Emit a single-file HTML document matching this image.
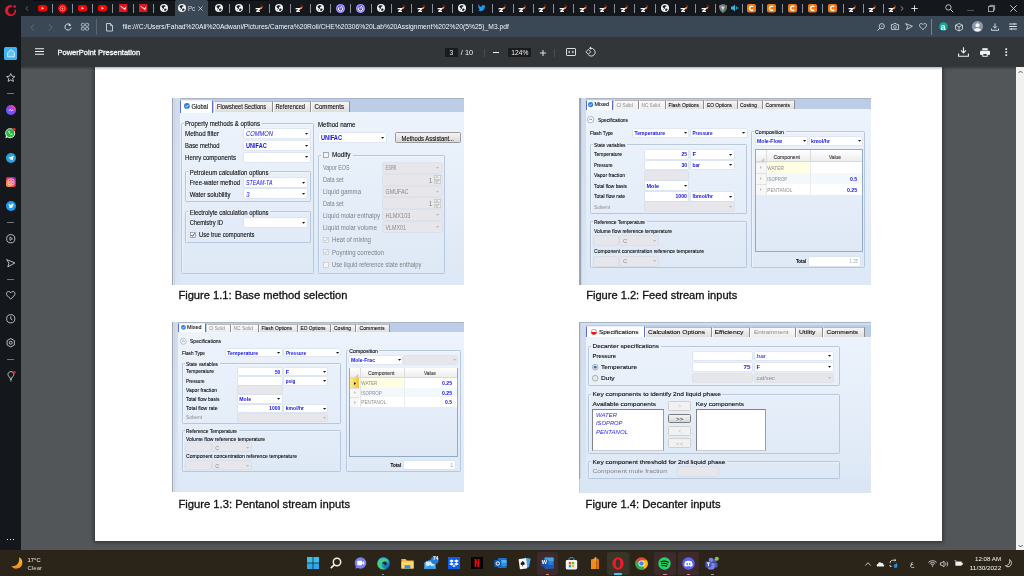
<!DOCTYPE html>
<html lang="en"><head><meta charset="utf-8"><title>PowerPoint Presentation</title>
<style>
*{margin:0;padding:0;box-sizing:border-box}
html,body{width:1024px;height:576px;overflow:hidden;background:#14171c;font-family:"Liberation Sans",sans-serif;}
.a{position:absolute}
.t{position:absolute;white-space:nowrap;line-height:1;}
.x{left:0;top:0;transform-origin:0 0}
#tabbar{left:0;top:0;width:1024px;height:16px;background:#14171c}
#side{left:0;top:0;width:21px;height:550px;background:#14171c}
#addr{left:21px;top:16px;width:1003px;height:21px;background:#3a4755}
#pdfbar{left:21px;top:37px;width:1003px;height:30px;background:#323639}
#pdfbg{left:21px;top:67px;width:995px;height:483px;background:#525659;overflow:hidden}
#page{left:74px;top:0;width:847px;height:474px;background:#fff;box-shadow:0 0 4px 1px rgba(0,0,0,.45)}
#vscroll{left:1016px;top:67px;width:8px;height:483px;background:#f1f1f1}
#task{left:0;top:550px;width:1024px;height:26px;background:#2b2419}
.sep{position:absolute;width:1px;background:#9aa0a8}
svg{position:absolute;overflow:visible}
</style></head>
<body>

<div class="a" id="root" style="left:0;top:0;width:1024px;height:576px;will-change:transform">
<div class="a" id="side"></div>
<div class="a" style="left:4.2px;top:47px;width:12.8px;height:12.8px;background:#3fb3ee;border-radius:1.6px"></div>
<svg style="left:6.6px;top:49px" width="8" height="8.5" viewBox="0 0 8 8.5"><path d="M.6 3.6 L4 .6 L7.4 3.6 V7.8 H.6Z" stroke="#d6f0ff" stroke-width=".9" fill="rgba(255,255,255,.22)" stroke-linejoin="round"/></svg>
<svg style="left:6px;top:72.5px" width="9.5" height="9" viewBox="0 0 9.5 9"><path d="M4.75 .6 L6 3.2 L8.9 3.5 L6.7 5.500 L7.400 8.4 L4.75 6.9 L2.1 8.4 L2.8 5.5 L.6 3.5 L3.5 3.2Z" stroke="#dfe2e6" stroke-width=".8" fill="none" stroke-linejoin="round"/></svg>
<div class="a" style="left:7.2px;top:93.4px;width:6.6px;height:1px;background:#6d747c"></div>
<svg style="left:5.6px;top:104.6px" width="10" height="10" viewBox="0 0 10 10"><defs><linearGradient id="mg" x1="0" y1="1" x2="1" y2="0"><stop offset="0" stop-color="#2a7cff"/><stop offset=".55" stop-color="#9a3df5"/><stop offset="1" stop-color="#ff5f6d"/></linearGradient></defs><circle cx="5" cy="5" r="5" fill="url(#mg)"/><path d="M2.2 6.200 L4.2 3.9 L5.6 5.2 L7.800 3.9 L5.800 6.200 L4.400 4.900Z" fill="#fff"/></svg>
<svg style="left:5.4px;top:128.4px" width="10.5" height="10.5" viewBox="0 0 10.5 10.5"><circle cx="5.2" cy="5.2" r="5" fill="#e9f5ea"/><circle cx="5.2" cy="5.200" r="4.1" fill="#2bb741"/><path d="M.3 10.200 L1.200 7.6 L2.900 9.300Z" fill="#e9f5ea"/><path d="M3.4 3 C3.200 4.800 5.300 7 7.200 6.900 L7.400 6 L6.400 5.500 L5.900 6 C5.200 5.700 4.600 5 4.300 4.400 L4.800 3.900 L4.300 2.900Z" fill="#fff"/><circle cx="9.200" cy="1.3" r="1.500" fill="#f01c24"/></svg>
<svg style="left:5.6px;top:153px" width="10" height="10" viewBox="0 0 10 10"><circle cx="5" cy="5" r="5" fill="#2a9fd9"/><path d="M2.100 4.900 L7.600 2.800 L6.700 7.400 L5.100 6.200 L4.300 7 L4.200 5.600 L6.500 3.700 L3.600 5.400Z" fill="#fff"/></svg>
<svg style="left:5.6px;top:177px" width="10" height="10" viewBox="0 0 10 10"><defs><linearGradient id="ig" x1="0" y1="1" x2="1" y2="0"><stop offset="0" stop-color="#fdc04f"/><stop offset=".3" stop-color="#f56a2a"/><stop offset=".6" stop-color="#e0206a"/><stop offset="1" stop-color="#6a3ad0"/></linearGradient></defs><rect width="10" height="10" rx="2.200" fill="url(#ig)"/><rect x="2.100" y="2.100" width="5.800" height="5.800" rx="1.600" stroke="#fff" stroke-width=".8" fill="none"/><circle cx="5" cy="5" r="1.400" stroke="#fff" stroke-width=".8" fill="none"/></svg>
<svg style="left:5.6px;top:201px" width="10" height="10" viewBox="0 0 10 10"><circle cx="5" cy="5" r="5" fill="#1d9bf0"/><path d="M7.900 3.300 C7.700 3.400 7.500 3.500 7.200 3.500 C7.500 3.300 7.700 3.100 7.800 2.800 C7.500 2.900 7.300 3 7 3.100 C6.400 2.400 5.100 2.900 5.300 3.900 C4.300 3.900 3.400 3.400 2.800 2.700 C2.500 3.200 2.600 3.900 3.100 4.300 C2.900 4.300 2.700 4.200 2.600 4.100 C2.600 4.700 3 5.200 3.500 5.300 C3.400 5.300 3.200 5.400 3 5.300 C3.100 5.800 3.600 6.100 4.100 6.100 C3.600 6.500 3 6.700 2.400 6.600 C4.600 8 7.300 6.400 7.300 3.900 C7.500 3.700 7.700 3.500 7.900 3.300Z" fill="#fff"/></svg>
<div class="a" style="left:7.2px;top:222px;width:6.6px;height:1px;background:#6d747c"></div>
<svg style="left:6px;top:234px" width="9.5" height="9.5" viewBox="0 0 9.5 9.5"><circle cx="4.750" cy="4.750" r="4.100" stroke="#dfe2e6" stroke-width=".8" fill="none"/><path d="M3.900 3.100 L6.500 4.750 L3.900 6.400Z" stroke="#dfe2e6" stroke-width=".7" fill="none" stroke-linejoin="round"/></svg>
<svg style="left:6px;top:258.5px" width="9.5" height="8.5" viewBox="0 0 9.5 8.5"><path d="M.6 .6 L8.900 3.900 L1.800 7.900 L3 4.200Z" stroke="#dfe2e6" stroke-width=".8" fill="none" stroke-linejoin="round"/></svg>
<div class="a" style="left:7.2px;top:279px;width:6.6px;height:1px;background:#6d747c"></div>
<svg style="left:6px;top:290.8px" width="9.5" height="8.5" viewBox="0 0 9.5 8.5"><path d="M4.750 7.900 C1.700 5.500 .5 4.100 .5 2.600 C.5 1.400 1.400 .5 2.600 .5 C3.500 .5 4.300 1 4.750 1.800 C5.200 1 6 .5 6.900 .5 C8.100 .5 9 1.400 9 2.600 C9 4.100 7.800 5.500 4.750 7.900Z" stroke="#dfe2e6" stroke-width=".8" fill="none"/></svg>
<svg style="left:6px;top:314px" width="9.5" height="9.5" viewBox="0 0 9.5 9.5"><circle cx="4.750" cy="4.750" r="4.100" stroke="#dfe2e6" stroke-width=".8" fill="none"/><path d="M4.750 2.300 V4.900 L6.400 5.900" stroke="#dfe2e6" stroke-width=".8" fill="none"/></svg>
<svg style="left:6px;top:337.5px" width="9.5" height="9.5" viewBox="0 0 9.5 9.5"><path d="M4.750 .5 L8.400 2.600 V6.900 L4.750 9 L1.100 6.900 V2.600Z" stroke="#dfe2e6" stroke-width=".8" fill="none" stroke-linejoin="round"/><circle cx="4.750" cy="4.750" r="1.500" stroke="#dfe2e6" stroke-width=".8" fill="none"/></svg>
<div class="a" style="left:7.2px;top:359px;width:6.6px;height:1px;background:#6d747c"></div>
<svg style="left:6.5px;top:371px" width="9" height="11" viewBox="0 0 9 11"><path d="M2.800 7.200 C2.800 5.900 1 5.300 1 3.400 C1 1.800 2.300 .6 3.900 .6 C5.500 .6 6.800 1.800 6.800 3.400 C6.800 5.300 5 5.900 5 7.200Z M2.900 8.600 H4.900 M3.300 9.900 H4.500" stroke="#dfe2e6" stroke-width=".8" fill="none"/><circle cx="7.300" cy="1.400" r="1.400" fill="#f01c24"/></svg>
<div class="a" style="left:7.2px;top:538.6px;width:1.2px;height:1.2px;background:#e6e8ea"></div>
<div class="a" style="left:9.9px;top:538.6px;width:1.2px;height:1.2px;background:#e6e8ea"></div>
<div class="a" style="left:12.6px;top:538.6px;width:1.2px;height:1.2px;background:#e6e8ea"></div>
<div class="a" id="tabbar" style="background:none">
<div class="a" style="left:33px;top:0;width:236px;height:1.2px;background:#0a0b0e"></div>
<div class="a" style="left:175px;top:0;width:33px;height:16px;background:#3a4755;border-radius:1.5px 1.5px 0 0"></div>
<svg style="left:4px;top:4px" width="13" height="13" viewBox="0 0 13 13"><path fill-rule="evenodd" fill="#e8182c" d="M6.600 .9 A5.600 5.600 0 1 0 6.600 12.100 A5.600 5.600 0 1 0 6.600 .9Z M7.500 2.700 C9.700 2.700 10.600 4.600 10.600 6.500 C10.600 8.600 9.400 10.400 7.300 10.400 C5.300 10.400 4.200 8.500 4.200 6.500 C4.200 4.400 5.500 2.700 7.500 2.700Z"/><path d="M7.600 0 L13 0 L13 5.800 L9.600 5.400 L8.600 3.600Z" fill="#14171c"/><circle cx="10.600" cy="2.600" r="1.250" fill="#f01c3c"/></svg>
<svg style="left:24.5px;top:5.5px" width="4" height="5" viewBox="0 0 4 5"><path d="M3.2 .4 L.8 2.5 L3.2 4.6" stroke="#5c626b" stroke-width="1" fill="none"/></svg>
<svg style="left:37.6px;top:4.8px" width="9" height="6.4" viewBox="0 0 9 6.4"><rect x="0" y="0" width="9" height="6.4" rx="1.8" fill="#f00"/><path d="M3.6 1.8 L5.9 3.2 L3.6 4.6Z" fill="#fff"/></svg>
<svg style="left:57.85px;top:3.5px" width="9" height="9" viewBox="0 0 9 9"><circle cx="4.5" cy="4.5" r="4.5" fill="#f00008"/><circle cx="4.5" cy="4.5" r="2.4" fill="none" stroke="#ff9a9a" stroke-width=".8"/><circle cx="4.5" cy="4.5" r=".9" fill="#ff9a9a"/></svg>
<svg style="left:78.1px;top:4.8px" width="9" height="6.4" viewBox="0 0 9 6.4"><rect x="0" y="0" width="9" height="6.4" rx="1.8" fill="#f00"/><path d="M3.6 1.8 L5.9 3.2 L3.6 4.6Z" fill="#fff"/></svg>
<svg style="left:98.35px;top:4.8px" width="9" height="6.4" viewBox="0 0 9 6.4"><rect x="0" y="0" width="9" height="6.4" rx="1.8" fill="#f00"/><path d="M3.6 1.8 L5.9 3.2 L3.6 4.6Z" fill="#fff"/></svg>
<svg style="left:118.89999999999999px;top:3.8px" width="8.4" height="8.1" viewBox="0 0 8.4 8.1"><rect width="8.400" height="8.100" fill="#e0141e"/><path d="M.9 1.700 C2 1.900 2.800 2.500 3.600 3.200 C4.400 3.800 5.300 4.200 5.900 4 C6.400 3.400 6.700 2.600 7.400 2 C7.200 3 6.800 3.900 6.600 4.800 C6.500 5.500 6.300 6.100 5.900 6.500 C5.800 5.800 5.600 5.200 5 4.900 C4.200 4.700 3.500 4.300 2.900 3.700 C2.300 3.100 1.600 2.500 .9 1.700Z" fill="#fff"/></svg>
<svg style="left:139.15px;top:3.8px" width="8.4" height="8.1" viewBox="0 0 8.4 8.1"><rect width="8.400" height="8.100" fill="#e0141e"/><path d="M.9 1.700 C2 1.900 2.800 2.500 3.600 3.200 C4.400 3.800 5.300 4.200 5.900 4 C6.400 3.400 6.700 2.600 7.400 2 C7.200 3 6.800 3.900 6.600 4.800 C6.500 5.500 6.300 6.100 5.900 6.500 C5.800 5.800 5.600 5.200 5 4.900 C4.200 4.700 3.500 4.300 2.900 3.700 C2.300 3.100 1.600 2.500 .9 1.700Z" fill="#fff"/></svg>
<svg style="left:159.6px;top:4px" width="8" height="8" viewBox="0 0 8 8"><circle cx="4" cy="4" r="4" fill="#f4f4f4"/><path d="M1.500 2.500 C2.500 1.200 4.700 1 5.700 1.900 C5.100 2.700 4.400 2.500 4 3.100 C3.600 3.700 4.500 3.900 4.100 4.500 C3.500 5 2.600 4.300 2.200 3.700 C1.900 3.300 1.500 3 1.500 2.500Z M4.600 4.700 C5.400 4.300 6.500 4.600 6.700 5.200 C6.300 6.200 5.500 6.900 4.600 7.100 C4.100 6.400 4 5.300 4.600 4.700Z M2 5.300 C2.500 5.300 2.900 5.700 2.900 6.300 C2.500 6.200 2.100 5.800 2 5.300Z" fill="#1b1e24"/></svg>
<div class="sep" style="left:51.6px;top:4px;height:9px;background:#8a9099"></div>
<div class="sep" style="left:71.8px;top:4px;height:9px;background:#8a9099"></div>
<div class="sep" style="left:92px;top:4px;height:9px;background:#8a9099"></div>
<div class="sep" style="left:112.2px;top:4px;height:9px;background:#8a9099"></div>
<div class="sep" style="left:132.5px;top:4px;height:9px;background:#8a9099"></div>
<div class="sep" style="left:152.8px;top:4px;height:9px;background:#8a9099"></div>
<svg style="left:177.8px;top:4px" width="8" height="8" viewBox="0 0 8 8"><circle cx="4" cy="4" r="4" fill="#f4f4f4"/><path d="M1.500 2.500 C2.500 1.200 4.700 1 5.700 1.900 C5.100 2.700 4.400 2.500 4 3.100 C3.600 3.700 4.500 3.900 4.100 4.500 C3.500 5 2.600 4.300 2.200 3.700 C1.900 3.300 1.500 3 1.500 2.500Z M4.600 4.700 C5.400 4.300 6.500 4.600 6.700 5.200 C6.300 6.200 5.500 6.900 4.600 7.100 C4.100 6.400 4 5.300 4.600 4.700Z M2 5.300 C2.500 5.300 2.900 5.700 2.900 6.300 C2.500 6.200 2.100 5.800 2 5.300Z" fill="#1b1e24"/></svg>
<span class="t" style="left:188px;top:6px;font-size:6.3px;color:#cfd9e4;letter-spacing:-.2px">Pc</span>
<svg style="left:198px;top:5.8px" width="5" height="5" viewBox="0 0 5 5"><path d="M.4 .4 L4.6 4.6 M4.6 .4 L.4 4.6" stroke="#e4e9ee" stroke-width=".7"/></svg>
<svg style="left:214.6px;top:4px" width="8" height="8" viewBox="0 0 8 8"><circle cx="4" cy="4" r="4" fill="#f4f4f4"/><path d="M1.500 2.500 C2.500 1.200 4.700 1 5.700 1.900 C5.100 2.700 4.400 2.500 4 3.100 C3.600 3.700 4.500 3.900 4.100 4.500 C3.500 5 2.600 4.300 2.200 3.700 C1.900 3.300 1.500 3 1.500 2.500Z M4.600 4.700 C5.400 4.300 6.500 4.600 6.700 5.200 C6.300 6.200 5.500 6.900 4.600 7.100 C4.100 6.400 4 5.300 4.600 4.700Z M2 5.300 C2.500 5.300 2.900 5.700 2.900 6.300 C2.500 6.200 2.100 5.800 2 5.300Z" fill="#1b1e24"/></svg>
<div class="sep" style="left:228.8px;top:4px;height:8.5px;width:.8px;background:#8a9099"></div>
<svg style="left:234.87px;top:4px" width="8" height="8" viewBox="0 0 8 8"><circle cx="4" cy="4" r="4" fill="#f4f4f4"/><path d="M1.500 2.500 C2.500 1.200 4.700 1 5.700 1.900 C5.100 2.700 4.400 2.500 4 3.100 C3.600 3.700 4.500 3.900 4.100 4.500 C3.500 5 2.600 4.300 2.200 3.700 C1.900 3.300 1.500 3 1.500 2.500Z M4.600 4.700 C5.400 4.300 6.500 4.600 6.700 5.200 C6.300 6.200 5.500 6.900 4.600 7.100 C4.100 6.400 4 5.300 4.600 4.700Z M2 5.300 C2.500 5.300 2.900 5.700 2.900 6.300 C2.500 6.200 2.100 5.800 2 5.300Z" fill="#1b1e24"/></svg>
<div class="sep" style="left:249.1px;top:4px;height:8.5px;width:.8px;background:#8a9099"></div>
<svg style="left:254.64px;top:3.5px" width="9" height="9" viewBox="0 0 9 9"><path d="M.6 4.600 H5.200 L1.700 7.300 H5" stroke="#f6f6f6" stroke-width="1.250" fill="none" stroke-linejoin="round"/><path d="M6.300 .4 C8.300 1.300 8.200 3.300 6.900 4.500 L5.600 3.900 C6.700 3.100 6.900 1.700 6.300 .4Z" fill="#e3192a"/><path d="M5.200 3.600 C5.800 2.900 6.900 3 7.200 3.800 C7.100 4.700 6 5.300 5.300 4.800Z" fill="#f7c51c"/></svg>
<div class="sep" style="left:269.3px;top:4px;height:8.5px;width:.8px;background:#8a9099"></div>
<svg style="left:275.40999999999997px;top:4px" width="8" height="8" viewBox="0 0 8 8"><circle cx="4" cy="4" r="4" fill="#f4f4f4"/><path d="M1.500 2.500 C2.500 1.200 4.700 1 5.700 1.900 C5.100 2.700 4.400 2.500 4 3.100 C3.600 3.700 4.500 3.900 4.100 4.500 C3.500 5 2.600 4.300 2.200 3.700 C1.900 3.300 1.500 3 1.500 2.500Z M4.600 4.700 C5.400 4.300 6.500 4.600 6.700 5.200 C6.300 6.200 5.500 6.900 4.600 7.100 C4.100 6.400 4 5.300 4.600 4.700Z M2 5.300 C2.500 5.300 2.900 5.700 2.900 6.300 C2.500 6.200 2.100 5.800 2 5.300Z" fill="#1b1e24"/></svg>
<div class="sep" style="left:289.6px;top:4px;height:8.5px;width:.8px;background:#8a9099"></div>
<svg style="left:295.17999999999995px;top:3.5px" width="9" height="9" viewBox="0 0 9 9"><path d="M.6 4.600 H5.200 L1.700 7.300 H5" stroke="#f6f6f6" stroke-width="1.250" fill="none" stroke-linejoin="round"/><path d="M6.300 .4 C8.300 1.300 8.200 3.300 6.900 4.500 L5.600 3.900 C6.700 3.100 6.900 1.700 6.300 .4Z" fill="#e3192a"/><path d="M5.200 3.600 C5.800 2.900 6.900 3 7.200 3.800 C7.100 4.700 6 5.300 5.300 4.800Z" fill="#f7c51c"/></svg>
<div class="sep" style="left:309.9px;top:4px;height:8.5px;width:.8px;background:#8a9099"></div>
<svg style="left:315.94999999999993px;top:4px" width="8" height="8" viewBox="0 0 8 8"><circle cx="4" cy="4" r="4" fill="#f4f4f4"/><path d="M1.500 2.500 C2.500 1.200 4.700 1 5.700 1.900 C5.100 2.700 4.400 2.500 4 3.100 C3.600 3.700 4.500 3.900 4.100 4.500 C3.500 5 2.600 4.300 2.200 3.700 C1.900 3.300 1.500 3 1.500 2.500Z M4.600 4.700 C5.400 4.300 6.500 4.600 6.700 5.200 C6.300 6.200 5.500 6.900 4.600 7.100 C4.100 6.400 4 5.300 4.600 4.700Z M2 5.300 C2.500 5.300 2.900 5.700 2.900 6.300 C2.500 6.200 2.100 5.800 2 5.300Z" fill="#1b1e24"/></svg>
<div class="sep" style="left:330.1px;top:4px;height:8.5px;width:.8px;background:#8a9099"></div>
<svg style="left:335.7199999999999px;top:3.5px" width="9" height="9" viewBox="0 0 9 9"><circle cx="4.5" cy="4.5" r="4.5" fill="#6a5be0"/><circle cx="4.5" cy="4.5" r="3.9" fill="none" stroke="#cfc9ff" stroke-width=".7"/><path d="M2.9 3.4 A2.2 2.2 0 1 0 6.2 3.4" stroke="#fff" stroke-width="1" fill="none"/><path d="M5.6 2 L4.4 4.4" stroke="#fff" stroke-width="1"/></svg>
<div class="sep" style="left:350.4px;top:4px;height:8.5px;width:.8px;background:#8a9099"></div>
<svg style="left:355.9899999999999px;top:3.5px" width="9" height="9" viewBox="0 0 9 9"><circle cx="4.5" cy="4.5" r="4.5" fill="#6a5be0"/><circle cx="4.5" cy="4.5" r="3.9" fill="none" stroke="#cfc9ff" stroke-width=".7"/><path d="M2.9 3.4 A2.2 2.2 0 1 0 6.2 3.4" stroke="#fff" stroke-width="1" fill="none"/><path d="M5.6 2 L4.4 4.4" stroke="#fff" stroke-width="1"/></svg>
<div class="sep" style="left:370.7px;top:4px;height:8.5px;width:.8px;background:#8a9099"></div>
<svg style="left:376.7599999999999px;top:4px" width="8" height="8" viewBox="0 0 8 8"><circle cx="4" cy="4" r="4" fill="#f4f4f4"/><path d="M1.500 2.500 C2.500 1.200 4.700 1 5.700 1.900 C5.100 2.700 4.400 2.500 4 3.100 C3.600 3.700 4.500 3.900 4.100 4.500 C3.500 5 2.600 4.300 2.200 3.700 C1.900 3.300 1.500 3 1.500 2.500Z M4.600 4.700 C5.400 4.300 6.500 4.600 6.700 5.200 C6.300 6.200 5.500 6.900 4.600 7.100 C4.100 6.400 4 5.300 4.600 4.700Z M2 5.300 C2.500 5.300 2.900 5.700 2.900 6.300 C2.500 6.200 2.100 5.800 2 5.300Z" fill="#1b1e24"/></svg>
<div class="sep" style="left:391.0px;top:4px;height:8.5px;width:.8px;background:#8a9099"></div>
<svg style="left:396.52999999999986px;top:3.5px" width="9" height="9" viewBox="0 0 9 9"><path d="M.6 4.600 H5.200 L1.700 7.300 H5" stroke="#f6f6f6" stroke-width="1.250" fill="none" stroke-linejoin="round"/><path d="M6.300 .4 C8.300 1.300 8.200 3.300 6.900 4.500 L5.600 3.900 C6.700 3.100 6.900 1.700 6.300 .4Z" fill="#e3192a"/><path d="M5.200 3.600 C5.800 2.900 6.900 3 7.200 3.800 C7.100 4.700 6 5.300 5.300 4.800Z" fill="#f7c51c"/></svg>
<div class="sep" style="left:411.2px;top:4px;height:8.5px;width:.8px;background:#8a9099"></div>
<svg style="left:416.79999999999984px;top:3.5px" width="9" height="9" viewBox="0 0 9 9"><path d="M.6 4.600 H5.200 L1.700 7.300 H5" stroke="#f6f6f6" stroke-width="1.250" fill="none" stroke-linejoin="round"/><path d="M6.300 .4 C8.300 1.300 8.200 3.300 6.900 4.500 L5.600 3.900 C6.700 3.100 6.900 1.700 6.300 .4Z" fill="#e3192a"/><path d="M5.200 3.600 C5.800 2.900 6.900 3 7.200 3.800 C7.100 4.700 6 5.300 5.300 4.800Z" fill="#f7c51c"/></svg>
<div class="sep" style="left:431.5px;top:4px;height:8.5px;width:.8px;background:#8a9099"></div>
<svg style="left:437.0699999999998px;top:3.5px" width="9" height="9" viewBox="0 0 9 9"><path d="M.6 4.600 H5.200 L1.700 7.300 H5" stroke="#f6f6f6" stroke-width="1.250" fill="none" stroke-linejoin="round"/><path d="M6.300 .4 C8.300 1.300 8.200 3.300 6.900 4.500 L5.600 3.900 C6.700 3.100 6.900 1.700 6.300 .4Z" fill="#e3192a"/><path d="M5.200 3.600 C5.800 2.900 6.900 3 7.200 3.800 C7.100 4.700 6 5.300 5.300 4.800Z" fill="#f7c51c"/></svg>
<div class="sep" style="left:451.8px;top:4px;height:8.5px;width:.8px;background:#8a9099"></div>
<svg style="left:457.8399999999998px;top:4px" width="8" height="8" viewBox="0 0 8 8"><circle cx="4" cy="4" r="4" fill="#f4f4f4"/><path d="M1.500 2.500 C2.500 1.200 4.700 1 5.700 1.900 C5.100 2.700 4.400 2.500 4 3.100 C3.600 3.700 4.500 3.900 4.100 4.500 C3.500 5 2.600 4.300 2.200 3.700 C1.900 3.300 1.500 3 1.500 2.500Z M4.600 4.700 C5.400 4.300 6.500 4.600 6.700 5.200 C6.300 6.200 5.500 6.900 4.600 7.100 C4.100 6.400 4 5.300 4.600 4.700Z M2 5.300 C2.500 5.300 2.900 5.700 2.900 6.300 C2.500 6.200 2.100 5.800 2 5.300Z" fill="#1b1e24"/></svg>
<div class="sep" style="left:472.0px;top:4px;height:8.5px;width:.8px;background:#8a9099"></div>
<svg style="left:478.3099999999998px;top:4.9px" width="7.6" height="6.3" viewBox="0 0 9 7.5"><path d="M9 1 C8.6 1.2 8.3 1.3 7.9 1.3 C8.3 1.1 8.6 .7 8.8 .2 C8.4 .4 8 .6 7.6 .7 C7.2 .3 6.7 0 6.2 0 C5.1 0 4.3 .9 4.3 1.9 C4.3 2 4.3 2.2 4.4 2.3 C2.8 2.2 1.5 1.5 .6 .4 C.4 .7 .3 1 .3 1.3 C.3 2 .7 2.5 1.2 2.9 C.9 2.9 .6 2.8 .3 2.7 C.3 3.6 1 4.3 1.8 4.5 C1.6 4.6 1.2 4.6 1 4.5 C1.2 5.3 1.9 5.8 2.7 5.8 C2 6.4 1.1 6.7 0 6.6 C.8 7.2 1.8 7.5 2.9 7.5 C6.2 7.5 8.1 4.7 8.1 2.2 L8.1 2 C8.4 1.7 8.8 1.4 9 1Z" fill="#1d9bf0"/><circle cx=".8" cy=".3" r=".9" fill="#e8308a"/></svg>
<div class="sep" style="left:492.3px;top:4px;height:8.5px;width:.8px;background:#8a9099"></div>
<svg style="left:497.87999999999977px;top:3.5px" width="9" height="9" viewBox="0 0 9 9"><path d="M.6 4.600 H5.200 L1.700 7.300 H5" stroke="#f6f6f6" stroke-width="1.250" fill="none" stroke-linejoin="round"/><path d="M6.300 .4 C8.300 1.300 8.200 3.300 6.900 4.500 L5.600 3.900 C6.700 3.100 6.900 1.700 6.300 .4Z" fill="#e3192a"/><path d="M5.200 3.600 C5.800 2.900 6.900 3 7.200 3.800 C7.100 4.700 6 5.300 5.300 4.800Z" fill="#f7c51c"/></svg>
<div class="sep" style="left:512.6px;top:4px;height:8.5px;width:.8px;background:#8a9099"></div>
<svg style="left:518.1499999999997px;top:3.5px" width="9" height="9" viewBox="0 0 9 9"><path d="M.6 4.600 H5.200 L1.700 7.300 H5" stroke="#f6f6f6" stroke-width="1.250" fill="none" stroke-linejoin="round"/><path d="M6.300 .4 C8.300 1.300 8.200 3.300 6.900 4.500 L5.600 3.900 C6.700 3.100 6.900 1.700 6.300 .4Z" fill="#e3192a"/><path d="M5.200 3.600 C5.800 2.900 6.900 3 7.200 3.800 C7.100 4.700 6 5.300 5.300 4.800Z" fill="#f7c51c"/></svg>
<div class="sep" style="left:532.8px;top:4px;height:8.5px;width:.8px;background:#8a9099"></div>
<svg style="left:538.4199999999997px;top:3.5px" width="9" height="9" viewBox="0 0 9 9"><path d="M.6 4.600 H5.200 L1.700 7.300 H5" stroke="#f6f6f6" stroke-width="1.250" fill="none" stroke-linejoin="round"/><path d="M6.300 .4 C8.300 1.300 8.200 3.300 6.900 4.500 L5.600 3.900 C6.700 3.100 6.900 1.700 6.300 .4Z" fill="#e3192a"/><path d="M5.200 3.600 C5.800 2.900 6.900 3 7.200 3.800 C7.100 4.700 6 5.300 5.300 4.800Z" fill="#f7c51c"/></svg>
<div class="sep" style="left:553.1px;top:4px;height:8.5px;width:.8px;background:#8a9099"></div>
<svg style="left:558.6899999999997px;top:3.5px" width="9" height="9" viewBox="0 0 9 9"><path d="M.6 4.600 H5.200 L1.700 7.300 H5" stroke="#f6f6f6" stroke-width="1.250" fill="none" stroke-linejoin="round"/><path d="M6.300 .4 C8.300 1.300 8.200 3.300 6.900 4.500 L5.600 3.900 C6.700 3.100 6.900 1.700 6.300 .4Z" fill="#e3192a"/><path d="M5.200 3.600 C5.800 2.900 6.900 3 7.200 3.800 C7.100 4.700 6 5.300 5.300 4.800Z" fill="#f7c51c"/></svg>
<div class="sep" style="left:573.4px;top:4px;height:8.5px;width:.8px;background:#8a9099"></div>
<svg style="left:578.9599999999997px;top:3.5px" width="9" height="9" viewBox="0 0 9 9"><path d="M.6 4.600 H5.200 L1.700 7.300 H5" stroke="#f6f6f6" stroke-width="1.250" fill="none" stroke-linejoin="round"/><path d="M6.300 .4 C8.300 1.300 8.200 3.300 6.900 4.500 L5.600 3.900 C6.700 3.100 6.900 1.700 6.300 .4Z" fill="#e3192a"/><path d="M5.200 3.600 C5.800 2.900 6.900 3 7.200 3.800 C7.100 4.700 6 5.300 5.300 4.800Z" fill="#f7c51c"/></svg>
<div class="sep" style="left:593.7px;top:4px;height:8.5px;width:.8px;background:#8a9099"></div>
<svg style="left:599.2299999999997px;top:3.5px" width="9" height="9" viewBox="0 0 9 9"><path d="M.6 4.600 H5.200 L1.700 7.300 H5" stroke="#f6f6f6" stroke-width="1.250" fill="none" stroke-linejoin="round"/><path d="M6.300 .4 C8.300 1.300 8.200 3.300 6.900 4.500 L5.600 3.900 C6.700 3.100 6.900 1.700 6.300 .4Z" fill="#e3192a"/><path d="M5.200 3.600 C5.800 2.900 6.900 3 7.200 3.800 C7.100 4.700 6 5.300 5.300 4.800Z" fill="#f7c51c"/></svg>
<div class="sep" style="left:613.9px;top:4px;height:8.5px;width:.8px;background:#8a9099"></div>
<svg style="left:619.4999999999997px;top:3.5px" width="9" height="9" viewBox="0 0 9 9"><path d="M.6 4.600 H5.200 L1.700 7.300 H5" stroke="#f6f6f6" stroke-width="1.250" fill="none" stroke-linejoin="round"/><path d="M6.300 .4 C8.300 1.300 8.200 3.300 6.900 4.500 L5.600 3.900 C6.700 3.100 6.900 1.700 6.300 .4Z" fill="#e3192a"/><path d="M5.200 3.600 C5.800 2.900 6.900 3 7.200 3.800 C7.100 4.700 6 5.300 5.300 4.800Z" fill="#f7c51c"/></svg>
<div class="sep" style="left:634.2px;top:4px;height:8.5px;width:.8px;background:#8a9099"></div>
<svg style="left:639.7699999999996px;top:3.5px" width="9" height="9" viewBox="0 0 9 9"><path d="M.6 4.600 H5.200 L1.700 7.300 H5" stroke="#f6f6f6" stroke-width="1.250" fill="none" stroke-linejoin="round"/><path d="M6.300 .4 C8.300 1.300 8.200 3.300 6.900 4.500 L5.600 3.900 C6.700 3.100 6.900 1.700 6.300 .4Z" fill="#e3192a"/><path d="M5.200 3.600 C5.800 2.900 6.900 3 7.200 3.800 C7.100 4.700 6 5.300 5.300 4.800Z" fill="#f7c51c"/></svg>
<div class="sep" style="left:654.5px;top:4px;height:8.5px;width:.8px;background:#8a9099"></div>
<svg style="left:660.5399999999996px;top:4px" width="8" height="8" viewBox="0 0 8 8"><circle cx="4" cy="4" r="4" fill="#f4f4f4"/><path d="M1.500 2.500 C2.500 1.200 4.700 1 5.700 1.900 C5.100 2.700 4.400 2.500 4 3.100 C3.600 3.700 4.500 3.900 4.100 4.500 C3.500 5 2.600 4.300 2.200 3.700 C1.900 3.300 1.500 3 1.500 2.500Z M4.600 4.700 C5.400 4.300 6.500 4.600 6.700 5.200 C6.300 6.200 5.500 6.900 4.600 7.100 C4.100 6.400 4 5.300 4.600 4.700Z M2 5.300 C2.500 5.300 2.900 5.700 2.900 6.300 C2.500 6.200 2.100 5.800 2 5.300Z" fill="#1b1e24"/></svg>
<div class="sep" style="left:674.7px;top:4px;height:8.5px;width:.8px;background:#8a9099"></div>
<svg style="left:680.3099999999996px;top:3.5px" width="9" height="9" viewBox="0 0 9 9"><path d="M.6 4.600 H5.200 L1.700 7.300 H5" stroke="#f6f6f6" stroke-width="1.250" fill="none" stroke-linejoin="round"/><path d="M6.300 .4 C8.300 1.300 8.200 3.300 6.900 4.500 L5.600 3.900 C6.700 3.100 6.900 1.700 6.300 .4Z" fill="#e3192a"/><path d="M5.200 3.600 C5.800 2.900 6.900 3 7.200 3.800 C7.100 4.700 6 5.300 5.300 4.800Z" fill="#f7c51c"/></svg>
<div class="sep" style="left:695.0px;top:4px;height:8.5px;width:.8px;background:#8a9099"></div>
<svg style="left:700.5799999999996px;top:3.5px" width="9" height="9" viewBox="0 0 9 9"><path d="M.6 4.600 H5.200 L1.700 7.300 H5" stroke="#f6f6f6" stroke-width="1.250" fill="none" stroke-linejoin="round"/><path d="M6.300 .4 C8.300 1.300 8.200 3.300 6.900 4.500 L5.600 3.900 C6.700 3.100 6.900 1.700 6.300 .4Z" fill="#e3192a"/><path d="M5.200 3.600 C5.800 2.900 6.900 3 7.200 3.800 C7.100 4.700 6 5.300 5.300 4.800Z" fill="#f7c51c"/></svg>
<div class="sep" style="left:715.3px;top:4px;height:8.5px;width:.8px;background:#8a9099"></div>
<svg style="left:719px;top:3.8px" width="8" height="9" viewBox="0 0 8 9"><path d="M4 0 L8 1.4 C8 5 6.4 7.6 4 9 C1.6 7.6 0 5 0 1.4Z" fill="#7c868f"/><path d="M4 0 L8 1.4 C8 5 6.4 7.6 4 9Z" fill="#5b7a52"/><path d="M2 2.4 L6 2.4 L4 6.4Z" fill="#cfd5da"/></svg>
<svg style="left:730.5px;top:4.2px" width="8" height="8" viewBox="0 0 8 8"><path d="M0 2.6 L1.8 2.6 L4 .6 L4 7.4 L1.8 5.4 L0 5.4Z" fill="#35b6e8"/><path d="M5.4 2.4 L5.4 5.6 M7 3.2 L7 4.8" stroke="#35b6e8" stroke-width=".9"/></svg>
<div class="sep" style="left:741.5px;top:4px;height:9px;background:#8a9099"></div>
<svg style="left:747.0px;top:3.8px" width="9" height="8.6" viewBox="0 0 9 8.6"><rect width="9" height="8.6" rx="1.8" fill="#ee7a12"/><path d="M6.2 2.8 A2.1 2.1 0 1 0 6.2 5.8" stroke="#fff" stroke-width="1.3" fill="none"/></svg>
<div class="sep" style="left:761.6px;top:4px;height:9px;background:#8a9099"></div>
<svg style="left:767.3px;top:3.8px" width="9" height="8.6" viewBox="0 0 9 8.6"><rect width="9" height="8.6" rx="1.8" fill="#ee7a12"/><path d="M6.2 2.8 A2.1 2.1 0 1 0 6.2 5.8" stroke="#fff" stroke-width="1.3" fill="none"/></svg>
<div class="sep" style="left:781.9px;top:4px;height:9px;background:#8a9099"></div>
<svg style="left:787.5px;top:3.8px" width="9" height="8.6" viewBox="0 0 9 8.6"><rect width="9" height="8.6" rx="1.8" fill="#ee7a12"/><path d="M6.2 2.8 A2.1 2.1 0 1 0 6.2 5.8" stroke="#fff" stroke-width="1.3" fill="none"/></svg>
<div class="sep" style="left:802.1px;top:4px;height:9px;background:#8a9099"></div>
<svg style="left:807.8px;top:3.8px" width="9" height="8.6" viewBox="0 0 9 8.6"><rect width="9" height="8.6" rx="1.8" fill="#ee7a12"/><path d="M6.2 2.8 A2.1 2.1 0 1 0 6.2 5.8" stroke="#fff" stroke-width="1.3" fill="none"/></svg>
<div class="sep" style="left:822.4px;top:4px;height:9px;background:#8a9099"></div>
<svg style="left:828.0px;top:3.8px" width="9" height="8.6" viewBox="0 0 9 8.6"><rect width="9" height="8.6" rx="1.8" fill="#ee7a12"/><path d="M6.2 2.8 A2.1 2.1 0 1 0 6.2 5.8" stroke="#fff" stroke-width="1.3" fill="none"/></svg>
<div class="sep" style="left:842.6px;top:4px;height:9px;background:#8a9099"></div>
<svg style="left:848.0px;top:3.5px" width="9" height="9" viewBox="0 0 9 9"><path d="M.6 4.600 H5.200 L1.700 7.300 H5" stroke="#f6f6f6" stroke-width="1.250" fill="none" stroke-linejoin="round"/><path d="M6.300 .4 C8.300 1.300 8.200 3.300 6.900 4.500 L5.600 3.900 C6.700 3.100 6.900 1.700 6.300 .4Z" fill="#e3192a"/><path d="M5.200 3.600 C5.800 2.900 6.900 3 7.200 3.800 C7.100 4.700 6 5.300 5.300 4.800Z" fill="#f7c51c"/></svg>
<div class="sep" style="left:862.6px;top:4px;height:9px;background:#8a9099"></div>
<svg style="left:868.2px;top:3.5px" width="9" height="9" viewBox="0 0 9 9"><path d="M.6 4.600 H5.200 L1.700 7.300 H5" stroke="#f6f6f6" stroke-width="1.250" fill="none" stroke-linejoin="round"/><path d="M6.300 .4 C8.300 1.300 8.200 3.300 6.900 4.500 L5.600 3.900 C6.700 3.100 6.900 1.700 6.300 .4Z" fill="#e3192a"/><path d="M5.200 3.600 C5.800 2.900 6.900 3 7.200 3.800 C7.100 4.700 6 5.300 5.300 4.800Z" fill="#f7c51c"/></svg>
<div class="sep" style="left:882.8px;top:4px;height:9px;background:#8a9099"></div>
<svg style="left:888.2px;top:3.5px" width="9" height="9" viewBox="0 0 9 9"><path d="M.6 4.600 H5.200 L1.700 7.300 H5" stroke="#f6f6f6" stroke-width="1.250" fill="none" stroke-linejoin="round"/><path d="M6.300 .4 C8.300 1.300 8.200 3.300 6.900 4.500 L5.600 3.900 C6.700 3.100 6.900 1.700 6.300 .4Z" fill="#e3192a"/><path d="M5.200 3.600 C5.800 2.900 6.900 3 7.200 3.800 C7.100 4.700 6 5.300 5.300 4.800Z" fill="#f7c51c"/></svg>
<svg style="left:899.5px;top:5.5px" width="4" height="5" viewBox="0 0 4 5"><path d="M.8 .4 L3.2 2.5 L.8 4.6" stroke="#9aa1aa" stroke-width=".9" fill="none"/></svg>
<svg style="left:911px;top:5px" width="7" height="7" viewBox="0 0 7 7"><path d="M3.5 .3 V6.7 M.3 3.5 H6.7" stroke="#e8ebee" stroke-width=".9"/></svg>
<svg style="left:945px;top:3.5px" width="9" height="9" viewBox="0 0 9 9"><circle cx="3.4" cy="3.4" r="2.7" stroke="#cfd3d8" stroke-width=".9" fill="none"/><path d="M5.4 5.4 L8.2 8.2" stroke="#cfd3d8" stroke-width="1"/></svg>
<div class="a" style="left:967px;top:10px;width:7px;height:1px;background:#4e545c"></div>
<svg style="left:988px;top:4.5px" width="7" height="7" viewBox="0 0 7 7"><rect x=".4" y="1.6" width="5" height="5" stroke="#b9bec5" stroke-width=".8" fill="none"/><path d="M1.8 1.4 V.4 H6.6 V5.2 H5.6" stroke="#b9bec5" stroke-width=".8" fill="none"/></svg>
<svg style="left:1009.5px;top:4.5px" width="7" height="7" viewBox="0 0 7 7"><path d="M.3 .3 L6.7 6.7 M6.7 .3 L.3 6.7" stroke="#d5d9de" stroke-width=".9"/></svg>
</div>
<div class="a" id="addr"></div>
<svg style="left:29.5px;top:23.5px" width="5" height="7" viewBox="0 0 5 7"><path d="M4.2 .4 L.8 3.5 L4.2 6.6" stroke="#66717d" stroke-width=".9" fill="none"/></svg>
<svg style="left:47.5px;top:23.5px" width="5" height="7" viewBox="0 0 5 7"><path d="M.8 .4 L4.2 3.5 L.8 6.6" stroke="#66717d" stroke-width=".9" fill="none"/></svg>
<svg style="left:63.5px;top:22.5px" width="8" height="8" viewBox="0 0 8 8"><path d="M6.6 2.2 A3.1 3.1 0 1 0 7.1 4.6" stroke="#e9edf1" stroke-width=".9" fill="none"/><path d="M5.2 .4 L7.2 2.4 L4.6 2.9Z" fill="#e9edf1"/></svg>
<svg style="left:81px;top:22.8px" width="8" height="7.5" viewBox="0 0 8 7.5"><rect x=".4" y=".4" width="3" height="2.8" rx=".9" stroke="#dfe4e9" stroke-width=".7" fill="none"/><rect x="4.6" y=".4" width="3" height="2.8" rx=".9" stroke="#dfe4e9" stroke-width=".7" fill="none"/><rect x=".4" y="4.3" width="3" height="2.8" rx=".9" stroke="#dfe4e9" stroke-width=".7" fill="none"/><rect x="4.6" y="4.3" width="3" height="2.8" rx=".9" stroke="#dfe4e9" stroke-width=".7" fill="none"/></svg>
<div class="sep" style="left:96px;top:19px;height:16px;background:#5a6672"></div>
<svg style="left:106px;top:22.5px" width="7" height="8.5" viewBox="0 0 7 8.5"><path d="M.5 .5 H4.4 L6.5 2.6 V8 H.5Z" stroke="#e4e8ec" stroke-width=".8" fill="none"/><path d="M4.4 .5 V2.6 H6.5" stroke="#e4e8ec" stroke-width=".7" fill="none"/></svg>
<span class="t x" style="font-size:7.2px;color:#f4f6f9;transform:translate(122.60px,23px) scaleX(0.9331);">file:///C:/Users/Fahad%20Ali%20Adwani/Pictures/Camera%20Roll/CHE%20306%20Lab%20Assignment%202%20(5%25)_M3.pdf</span>
<svg style="left:877px;top:22.5px" width="8" height="8" viewBox="0 0 8 8"><circle cx="4.8" cy="3.2" r="2.6" stroke="#dfe4e9" stroke-width=".8" fill="none"/><path d="M2.9 5.1 L.4 7.6" stroke="#dfe4e9" stroke-width=".9"/><path d="M4 3.2 H5.6" stroke="#dfe4e9" stroke-width=".7"/></svg>
<svg style="left:891px;top:22.8px" width="8" height="7" viewBox="0 0 8 7"><path d="M.4 1.6 H2.2 L2.9 .5 H5.1 L5.8 1.6 H7.6 V6.4 H.4Z" stroke="#dfe4e9" stroke-width=".8" fill="none"/><circle cx="4" cy="3.9" r="1.4" stroke="#dfe4e9" stroke-width=".7" fill="none"/></svg>
<svg style="left:905px;top:22.8px" width="8" height="7" viewBox="0 0 8 7"><path d="M.6 .6 L7.4 3.2 L1.6 6.6 L2.6 3.4Z" stroke="#dfe4e9" stroke-width=".8" fill="none" stroke-linejoin="round"/></svg>
<svg style="left:919px;top:23px" width="8" height="7" viewBox="0 0 8 7"><path d="M4 6.5 C1.5 4.6 .5 3.4 .5 2.2 C.5 1.2 1.3 .5 2.2 .5 C3 .5 3.6 .9 4 1.6 C4.4 .9 5 .5 5.8 .5 C6.7 .5 7.5 1.2 7.5 2.2 C7.5 3.4 6.5 4.6 4 6.5Z" stroke="#dfe4e9" stroke-width=".8" fill="none"/></svg>
<div class="sep" style="left:931px;top:19px;height:16px;background:#77828d"></div>
<svg style="left:938.5px;top:22px" width="9" height="9" viewBox="0 0 9 9"><circle cx="4.5" cy="4.5" r="4.3" fill="#12a89a"/></svg>
<span class="t x" style="font-size:9.2px;color:#fff;font-weight:bold;transform:translate(940.44px,23px);">a</span>
<svg style="left:955px;top:22.5px" width="8" height="8.5" viewBox="0 0 8 8.5"><path d="M4 .5 L7.5 2.2 V6.2 L4 8 L.5 6.2 V2.2Z M.5 2.2 L4 4 L7.5 2.2 M4 4 V8" stroke="#dfe4e9" stroke-width=".8" fill="none" stroke-linejoin="round"/></svg>
<svg style="left:972px;top:21px" width="11" height="11" viewBox="0 0 11 11"><circle cx="5.5" cy="5.5" r="5.5" fill="#8d98aa"/><circle cx="5.5" cy="4.2" r="2" fill="#f3f5f8"/><path d="M1.9 9 C2.3 6.8 8.7 6.8 9.1 9 A5.2 5.2 0 0 1 1.900 9Z" fill="#f3f5f8"/></svg>
<svg style="left:991px;top:22.5px" width="8" height="8" viewBox="0 0 8 8"><path d="M4 .4 V5 M2 3.2 L4 5.2 L6 3.2" stroke="#dfe4e9" stroke-width=".9" fill="none"/><path d="M.5 5.6 V7.3 H7.5 V5.6" stroke="#dfe4e9" stroke-width=".9" fill="none"/></svg>
<svg style="left:1009px;top:23px" width="8" height="7" viewBox="0 0 8 7"><path d="M.2 1 H7.8 M.2 3.5 H7.8 M.2 6 H7.8" stroke="#dfe4e9" stroke-width="1"/><path d="M5.4 .2 V1.8 M2.4 5.2 V6.8" stroke="#dfe4e9" stroke-width=".9"/></svg>
<div class="a" id="pdfbar"></div>
<svg style="left:35px;top:48.1px" width="9" height="7" viewBox="0 0 9 7"><path d="M0 .7 H9 M0 3.5 H9 M0 6.3 H9" stroke="#f1f1f1" stroke-width="1.1"/></svg>
<span class="t x" style="font-size:7.4px;color:#fbfbfb;-webkit-text-stroke:0.28px #fbfbfb;transform:translate(57.50px,49px) scaleX(1.0165);">PowerPoint Presentation</span>
<div class="a" style="left:445px;top:47.5px;width:13px;height:9.5px;background:#191b1c"></div>
<span class="t x" style="font-size:6.8px;color:#f1f1f1;transform:translate(449.60px,50px);">3</span>
<span class="t x" style="font-size:6.8px;color:#f1f1f1;transform:translate(460.80px,50px) scaleX(1.0843);">/ 10</span>
<div class="sep" style="left:483.5px;top:48.5px;height:8px;background:#4a4e51"></div>
<div class="a" style="left:493px;top:52px;width:6px;height:1px;background:#f1f1f1"></div>
<div class="a" style="left:508px;top:47.5px;width:23px;height:9.5px;background:#191b1c"></div>
<span class="t x" style="font-size:6.4px;color:#f1f1f1;transform:translate(511.30px,50px) scaleX(1.0392);">124%</span>
<svg style="left:539.5px;top:49.5px" width="6" height="6" viewBox="0 0 6 6"><path d="M3 0 V6 M0 3 H6" stroke="#f1f1f1" stroke-width=".9"/></svg>
<div class="sep" style="left:554px;top:48.5px;height:8px;background:#4a4e51"></div>
<svg style="left:566px;top:47.8px" width="10" height="8" viewBox="0 0 10 8"><rect x=".5" y=".5" width="9" height="7" rx=".6" stroke="#f1f1f1" stroke-width=".9" fill="none"/><path d="M3.700 2.500 L2 4 L3.700 5.500Z M6.300 2.500 L8 4 L6.300 5.500Z" fill="#f1f1f1"/></svg>
<svg style="left:584px;top:45.8px" width="12" height="11" viewBox="0 0 12 11"><path d="M4.300 3.450 L6.700 5.850 L4.300 8.250 L1.900 5.850Z" stroke="#f1f1f1" stroke-width=".85" fill="none"/><path d="M6.570 2.360 A3.900 3.900 0 1 1 4.260 8.710" stroke="#f1f1f1" stroke-width=".85" fill="none"/><path d="M7.100 .5 L5 2.300 L7.200 3.700Z" fill="#f1f1f1"/></svg>
<svg style="left:958px;top:47px" width="11" height="10" viewBox="0 0 11 10"><path d="M5.5 .3 V5.6 M3 3.4 L5.5 5.9 L8 3.4" stroke="#f1f1f1" stroke-width="1.1" fill="none"/><path d="M.6 6.4 V9.2 H10.4 V6.4" stroke="#f1f1f1" stroke-width="1.1" fill="none"/></svg>
<svg style="left:980px;top:47.5px" width="10" height="9" viewBox="0 0 10 9"><rect x="2.3" y=".2" width="5.4" height="2" fill="#f1f1f1"/><rect x="0" y="2.7" width="10" height="4.2" rx=".9" fill="#f1f1f1"/><rect x="2.3" y="5.2" width="5.400" height="3.6" fill="#f1f1f1"/><rect x="3.3" y="6" width="3.4" height="1.8" fill="#323639"/></svg>
<svg style="left:1004.5px;top:48px" width="3" height="9" viewBox="0 0 3 9"><rect x=".4" y=".3" width="1.7" height="1.7" fill="#f1f1f1"/><rect x=".4" y="3.3" width="1.7" height="1.7" fill="#f1f1f1"/><rect x=".4" y="6.3" width="1.700" height="1.7" fill="#f1f1f1"/></svg>
<div class="a" id="pdfbg"><div class="a" id="page"></div></div>
<div class="a" style="left:21px;top:67px;width:995px;height:3px;background:linear-gradient(rgba(0,0,0,.28),rgba(0,0,0,0))"></div>
<div class="a" id="vscroll"></div>
<svg style="left:1018px;top:70px" width="5" height="4" viewBox="0 0 5 4"><path d="M.5 3 L2.500 1 L4.500 3" stroke="#505050" stroke-width=".9" fill="none"/></svg>
<svg style="left:1018px;top:544px" width="5" height="4" viewBox="0 0 5 4"><path d="M.5 1 L2.500 3 L4.500 1" stroke="#505050" stroke-width=".9" fill="none"/></svg>
<div class="a" id="figs" style="left:0;top:0">
<div class="a" style="left:172.20px;top:98.00px;width:291.80px;height:186.80px;background:linear-gradient(#eef4fc,#dde8f6)"></div>
<div class="a" style="left:172.20px;top:98.00px;width:291.80px;height:14.00px;background:#bccde7"></div>
<div class="a" style="left:172.20px;top:98.00px;width:291.80px;height:1.20px;background:#aab6c8"></div>
<div class="a" style="left:172.20px;top:98.00px;width:8.00px;height:186.80px;background:linear-gradient(#d0dcee,#dbe5f3)"></div>
<div class="a" style="left:172.20px;top:98.00px;width:1.30px;height:186.80px;background:#9aa5b5"></div>
<div class="a" style="left:173.50px;top:99.00px;width:1.00px;height:185.80px;background:#c9d3e2"></div>
<div class="a" style="left:180.30px;top:100.00px;width:32.70px;height:12.60px;background:#fdfeff;border-left:1px solid #5c6fc4;border-right:1px solid #5c6fc4;border-top:1px solid #e8eefa"></div>
<span class="t x" style="font-size:6.6px;color:#0c0c0c;-webkit-text-stroke:0.1px #0c0c0c;transform:translate(191.50px,104px) scaleX(0.8656);">Global</span>
<svg style="left:184.10px;top:103.10px" width="5.8" height="5.8" viewBox="0 0 10 10"><circle cx="5" cy="5" r="5" fill="#2b7de0"/><path d="M2.4 5.200 L4.300 7 L7.600 3.200" stroke="#fff" stroke-width="1.500" fill="none"/></svg>
<div class="a" style="left:213.80px;top:100.80px;width:59.00px;height:11.20px;background:linear-gradient(#f6f6f6,#dedede);border-right:1px solid #8d8d8d;border-top:1px solid #b9b9b9;border-left:1px solid #fbfbfb"></div>
<span class="t x" style="font-size:6.6px;color:#0c0c0c;-webkit-text-stroke:0.1px #0c0c0c;transform:translate(217.00px,104px) scaleX(0.8568);">Flowsheet Sections</span>
<div class="a" style="left:272.80px;top:100.80px;width:38.50px;height:11.20px;background:linear-gradient(#f6f6f6,#dedede);border-right:1px solid #8d8d8d;border-top:1px solid #b9b9b9;border-left:1px solid #fbfbfb"></div>
<span class="t x" style="font-size:6.6px;color:#0c0c0c;-webkit-text-stroke:0.1px #0c0c0c;transform:translate(275.50px,104px) scaleX(0.8653);">Referenced</span>
<div class="a" style="left:311.30px;top:100.80px;width:38.90px;height:11.20px;background:linear-gradient(#f6f6f6,#dedede);border-right:1px solid #8d8d8d;border-top:1px solid #b9b9b9;border-left:1px solid #fbfbfb"></div>
<span class="t x" style="font-size:6.6px;color:#0c0c0c;-webkit-text-stroke:0.1px #0c0c0c;transform:translate(314.50px,104px) scaleX(0.9250);">Comments</span>
<div class="a" style="left:181.00px;top:123.00px;width:133.00px;height:151.00px;border:1px solid #b7c7de;border-radius:1.3px;box-shadow:inset .5px .5px 0 rgba(255,255,255,.7)"></div>
<div class="a" style="left:183.50px;top:121.30px;width:78.00px;height:5.00px;background:#ecf2fb"></div>
<span class="t x" style="font-size:6.6px;color:#0c0c0c;-webkit-text-stroke:0.1px #0c0c0c;transform:translate(185.00px,121px) scaleX(0.9217);">Property methods &amp; options</span>
<span class="t x" style="font-size:6.6px;color:#0c0c0c;-webkit-text-stroke:0.1px #0c0c0c;transform:translate(185.00px,131px) scaleX(0.9367);">Method filter</span>
<div class="a" style="left:244.00px;top:129.15px;width:65.70px;height:9.10px;background:#fff;box-shadow:0 0 0 .6px #d3deec;border-radius:1px"></div>
<svg style="left:304.70px;top:133.00px" width="3.2" height="1.8" viewBox="0 0 3.2 1.8"><path d="M0 0 H3.2 L1.6 1.8Z" fill="#111"/></svg>
<span class="t x" style="font-size:6.4px;color:#1414e6;font-style:italic;transform:translate(246.00px,131px) scaleX(0.9052);">COMMON</span>
<span class="t x" style="font-size:6.6px;color:#0c0c0c;-webkit-text-stroke:0.1px #0c0c0c;transform:translate(185.00px,143px) scaleX(0.8878);">Base method</span>
<div class="a" style="left:244.00px;top:140.90px;width:65.70px;height:9.10px;background:#fff;box-shadow:0 0 0 .6px #d3deec;border-radius:1px"></div>
<svg style="left:304.70px;top:144.75px" width="3.2" height="1.8" viewBox="0 0 3.2 1.8"><path d="M0 0 H3.2 L1.6 1.8Z" fill="#111"/></svg>
<span class="t x" style="font-size:6.4px;color:#1414e6;font-weight:bold;transform:translate(246.00px,143px) scaleX(0.8699);">UNIFAC</span>
<span class="t x" style="font-size:6.6px;color:#0c0c0c;-webkit-text-stroke:0.1px #0c0c0c;transform:translate(185.00px,155px) scaleX(0.9215);">Henry components</span>
<div class="a" style="left:244.00px;top:152.60px;width:65.70px;height:9.10px;background:#fff;box-shadow:0 0 0 .6px #d3deec;border-radius:1px"></div>
<svg style="left:304.70px;top:156.45px" width="3.2" height="1.8" viewBox="0 0 3.2 1.8"><path d="M0 0 H3.2 L1.6 1.8Z" fill="#111"/></svg>
<div class="a" style="left:185.00px;top:171.00px;width:126.00px;height:31.00px;border:1px solid #b7c7de;border-radius:1.3px;box-shadow:inset .5px .5px 0 rgba(255,255,255,.7)"></div>
<div class="a" style="left:188.20px;top:169.70px;width:81.80px;height:5.00px;background:#e9f0fa"></div>
<span class="t x" style="font-size:6.6px;color:#0c0c0c;-webkit-text-stroke:0.1px #0c0c0c;transform:translate(189.70px,170px) scaleX(0.9148);">Petroleum calculation options</span>
<span class="t x" style="font-size:6.6px;color:#0c0c0c;-webkit-text-stroke:0.1px #0c0c0c;transform:translate(189.70px,180px) scaleX(0.9030);">Free-water method</span>
<div class="a" style="left:244.00px;top:177.90px;width:63.00px;height:9.00px;background:#fff;box-shadow:0 0 0 .6px #d3deec;border-radius:1px"></div>
<svg style="left:301.90px;top:181.70px" width="3.2" height="1.8" viewBox="0 0 3.2 1.8"><path d="M0 0 H3.2 L1.6 1.8Z" fill="#111"/></svg>
<span class="t x" style="font-size:6.4px;color:#1414e6;font-style:italic;transform:translate(246.00px,180px) scaleX(0.8322);">STEAM-TA</span>
<span class="t x" style="font-size:6.6px;color:#0c0c0c;-webkit-text-stroke:0.1px #0c0c0c;transform:translate(189.70px,192px) scaleX(0.9175);">Water solubility</span>
<div class="a" style="left:244.00px;top:189.20px;width:63.00px;height:9.00px;background:#fff;box-shadow:0 0 0 .6px #d3deec;border-radius:1px"></div>
<svg style="left:301.90px;top:193.00px" width="3.2" height="1.8" viewBox="0 0 3.2 1.8"><path d="M0 0 H3.2 L1.6 1.8Z" fill="#111"/></svg>
<span class="t x" style="font-size:6.4px;color:#1414e6;font-style:italic;transform:translate(246.00px,192px);">3</span>
<div class="a" style="left:185.00px;top:211.00px;width:126.00px;height:32.00px;border:1px solid #b7c7de;border-radius:1.3px;box-shadow:inset .5px .5px 0 rgba(255,255,255,.7)"></div>
<div class="a" style="left:188.20px;top:209.60px;width:81.80px;height:5.00px;background:#e6eef9"></div>
<span class="t x" style="font-size:6.6px;color:#0c0c0c;-webkit-text-stroke:0.1px #0c0c0c;transform:translate(189.70px,210px) scaleX(0.9071);">Electrolyte calculation options</span>
<span class="t x" style="font-size:6.6px;color:#0c0c0c;-webkit-text-stroke:0.1px #0c0c0c;transform:translate(189.70px,220px) scaleX(0.8738);">Chemistry ID</span>
<div class="a" style="left:244.00px;top:217.80px;width:63.00px;height:9.10px;background:#fff;box-shadow:0 0 0 .6px #d3deec;border-radius:1px"></div>
<svg style="left:301.90px;top:221.65px" width="3.2" height="1.8" viewBox="0 0 3.2 1.8"><path d="M0 0 H3.2 L1.6 1.8Z" fill="#111"/></svg>
<svg style="left:189.70px;top:231.60px" width="5.8" height="5.8" viewBox="0 0 10 10"><rect x=".6" y=".6" width="8.800" height="8.800" fill="#f4f4f4" stroke="#8c8d8f" stroke-width="1.200"/><path d="M2.300 5.200 L4.300 7.500 L7.900 2.300" stroke="#2525b0" stroke-width="1.400" fill="none"/></svg>
<span class="t x" style="font-size:6.6px;color:#0c0c0c;-webkit-text-stroke:0.1px #0c0c0c;transform:translate(199.00px,232px) scaleX(0.8853);">Use true components</span>
<span class="t x" style="font-size:6.6px;color:#0c0c0c;-webkit-text-stroke:0.1px #0c0c0c;transform:translate(318.00px,122px) scaleX(0.9299);">Method name</span>
<div class="a" style="left:318.60px;top:132.50px;width:67.40px;height:9.80px;background:#fff;box-shadow:0 0 0 .6px #d3deec;border-radius:1px"></div>
<svg style="left:380.70px;top:136.70px" width="3.2" height="1.8" viewBox="0 0 3.2 1.8"><path d="M0 0 H3.2 L1.6 1.8Z" fill="#111"/></svg>
<span class="t x" style="font-size:6.4px;color:#1414e6;font-weight:bold;transform:translate(321.00px,135px) scaleX(0.8825);">UNIFAC</span>
<div class="a" style="left:394.80px;top:132.20px;width:66.00px;height:11.20px;background:linear-gradient(#f4f4f4,#d9d9d9);border:1px solid #9b9b9b;border-radius:1.5px"></div>
<span class="t x" style="font-size:6.6px;color:#0c0c0c;-webkit-text-stroke:0.1px #0c0c0c;transform:translate(401.50px,136px) scaleX(0.8896);">Methods Assistant...</span>
<div class="a" style="left:318.00px;top:155.00px;width:127.00px;height:119.00px;border:1px solid #b7c7de;border-radius:1.3px;box-shadow:inset .5px .5px 0 rgba(255,255,255,.7)"></div>
<div class="a" style="left:321.00px;top:151.00px;width:31.50px;height:7.50px;background:#ebf1fb"></div>
<svg style="left:322.80px;top:151.50px" width="5.8" height="5.8" viewBox="0 0 10 10"><rect x=".6" y=".6" width="8.800" height="8.800" fill="#f4f4f4" stroke="#8c8d8f" stroke-width="1.200"/></svg>
<span class="t x" style="font-size:6.8px;color:#0c0c0c;-webkit-text-stroke:0.1px #0c0c0c;transform:translate(332.00px,152px) scaleX(0.9236);">Modify</span>
<span class="t x" style="font-size:6.6px;color:#7f8287;transform:translate(323.00px,165px) scaleX(0.8061);">Vapor EOS</span>
<div class="a" style="left:383.00px;top:162.80px;width:58.70px;height:9.80px;background:#e7e6ea;box-shadow:0 0 0 .6px #d3d6de;border-radius:1px"></div>
<svg style="left:436.40px;top:167.00px" width="3.2" height="1.8" viewBox="0 0 3.2 1.8"><path d="M0 0 H3.2 L1.6 1.8Z" fill="#b8b8b8"/></svg>
<span class="t x" style="font-size:6.4px;color:#8a8a8a;transform:translate(385.50px,165px) scaleX(0.6320);">ESRK</span>
<span class="t x" style="font-size:6.6px;color:#7f8287;transform:translate(323.00px,177px) scaleX(0.8346);">Data set</span>
<div class="a" style="left:383.00px;top:174.80px;width:58.70px;height:9.80px;background:#e7e6ea;box-shadow:0 0 0 .6px #d3d6de;border-radius:1px"></div>
<span class="t x" style="font-size:6.6px;color:#8a8a8a;transform:translate(428.83px,178px);">1</span>
<div class="a" style="left:433.50px;top:175.20px;width:7.80px;height:4.40px;background:#f2f2f2;border:1px solid #cdcdcd"></div>
<div class="a" style="left:433.50px;top:180.00px;width:7.80px;height:4.40px;background:#f2f2f2;border:1px solid #cdcdcd"></div>
<svg style="left:435.4px;top:176.30px" width="4" height="7" viewBox="0 0 4 7"><path d="M.4 2 L2 .6 L3.6 2 M.4 5 L2 6.400 L3.600 5" stroke="#8a8a8a" stroke-width=".7" fill="none"/></svg>
<span class="t x" style="font-size:6.6px;color:#7f8287;transform:translate(323.00px,189px) scaleX(0.9174);">Liquid gamma</span>
<div class="a" style="left:383.00px;top:186.70px;width:58.70px;height:9.80px;background:#e7e6ea;box-shadow:0 0 0 .6px #d3d6de;border-radius:1px"></div>
<svg style="left:436.40px;top:190.90px" width="3.2" height="1.8" viewBox="0 0 3.2 1.8"><path d="M0 0 H3.2 L1.6 1.8Z" fill="#b8b8b8"/></svg>
<span class="t x" style="font-size:6.4px;color:#8a8a8a;transform:translate(385.50px,189px) scaleX(0.8411);">GMUFAC</span>
<span class="t x" style="font-size:6.6px;color:#7f8287;transform:translate(323.00px,201px) scaleX(0.8346);">Data set</span>
<div class="a" style="left:383.00px;top:198.40px;width:58.70px;height:9.80px;background:#e7e6ea;box-shadow:0 0 0 .6px #d3d6de;border-radius:1px"></div>
<span class="t x" style="font-size:6.6px;color:#8a8a8a;transform:translate(428.83px,201px);">1</span>
<div class="a" style="left:433.50px;top:198.80px;width:7.80px;height:4.40px;background:#f2f2f2;border:1px solid #cdcdcd"></div>
<div class="a" style="left:433.50px;top:203.60px;width:7.80px;height:4.40px;background:#f2f2f2;border:1px solid #cdcdcd"></div>
<svg style="left:435.4px;top:199.90px" width="4" height="7" viewBox="0 0 4 7"><path d="M.4 2 L2 .6 L3.6 2 M.4 5 L2 6.400 L3.600 5" stroke="#8a8a8a" stroke-width=".7" fill="none"/></svg>
<span class="t x" style="font-size:6.6px;color:#7f8287;transform:translate(323.00px,213px) scaleX(0.9093);">Liquid molar enthalpy</span>
<div class="a" style="left:383.00px;top:210.20px;width:58.70px;height:9.80px;background:#e7e6ea;box-shadow:0 0 0 .6px #d3d6de;border-radius:1px"></div>
<svg style="left:436.40px;top:214.40px" width="3.2" height="1.8" viewBox="0 0 3.2 1.8"><path d="M0 0 H3.2 L1.6 1.8Z" fill="#b8b8b8"/></svg>
<span class="t x" style="font-size:6.4px;color:#8a8a8a;transform:translate(385.50px,213px) scaleX(0.8796);">HLMX103</span>
<span class="t x" style="font-size:6.6px;color:#7f8287;transform:translate(323.00px,225px) scaleX(0.9150);">Liquid molar volume</span>
<div class="a" style="left:383.00px;top:221.90px;width:58.70px;height:9.80px;background:#e7e6ea;box-shadow:0 0 0 .6px #d3d6de;border-radius:1px"></div>
<svg style="left:436.40px;top:226.10px" width="3.2" height="1.8" viewBox="0 0 3.2 1.8"><path d="M0 0 H3.2 L1.6 1.8Z" fill="#b8b8b8"/></svg>
<span class="t x" style="font-size:6.4px;color:#8a8a8a;transform:translate(385.50px,225px) scaleX(0.8362);">VLMX01</span>
<svg style="left:323.00px;top:236.50px" width="5.8" height="5.8" viewBox="0 0 10 10"><rect x=".6" y=".6" width="8.800" height="8.800" fill="#f5f5f5" stroke="#c6c6c6" stroke-width="1.200"/><path d="M2.300 5.200 L4.300 7.500 L7.900 2.300" stroke="#b4b4c8" stroke-width="1.400" fill="none"/></svg>
<span class="t x" style="font-size:6.6px;color:#7f8287;transform:translate(332.00px,237px) scaleX(0.9251);">Heat of mixing</span>
<svg style="left:323.00px;top:249.10px" width="5.8" height="5.8" viewBox="0 0 10 10"><rect x=".6" y=".6" width="8.800" height="8.800" fill="#f5f5f5" stroke="#c6c6c6" stroke-width="1.200"/><path d="M2.300 5.200 L4.300 7.500 L7.900 2.300" stroke="#b4b4c8" stroke-width="1.400" fill="none"/></svg>
<span class="t x" style="font-size:6.6px;color:#7f8287;transform:translate(332.00px,250px) scaleX(0.9211);">Poynting correction</span>
<svg style="left:323.00px;top:261.80px" width="5.8" height="5.8" viewBox="0 0 10 10"><rect x=".6" y=".6" width="8.800" height="8.800" fill="#f5f5f5" stroke="#c6c6c6" stroke-width="1.200"/></svg>
<span class="t x" style="font-size:6.6px;color:#7f8287;transform:translate(332.00px,262px) scaleX(0.8815);">Use liquid reference state enthalpy</span>
<span class="t x" style="font-size:11px;color:#111;-webkit-text-stroke:0.3px #111;transform:translate(178.40px,290px) scaleX(1.0124);">Figure 1.1: Base method selection</span>
<div class="a" style="left:579.40px;top:98.00px;width:291.70px;height:186.80px;background:linear-gradient(#eef4fc,#dde8f6)"></div>
<div class="a" style="left:579.40px;top:98.00px;width:291.70px;height:11.20px;background:#bccde7"></div>
<div class="a" style="left:579.40px;top:98.00px;width:291.70px;height:1.20px;background:#aab6c8"></div>
<div class="a" style="left:579.40px;top:98.00px;width:6.20px;height:186.80px;background:linear-gradient(#d0dcee,#dbe5f3)"></div>
<div class="a" style="left:579.40px;top:98.00px;width:1.30px;height:186.80px;background:#9aa5b5"></div>
<div class="a" style="left:580.70px;top:99.00px;width:1.00px;height:185.80px;background:#c9d3e2"></div>
<div class="a" style="left:585.60px;top:99.60px;width:27.40px;height:10.20px;background:#fdfeff;border-left:1px solid #5c6fc4;border-right:1px solid #5c6fc4;border-top:1px solid #e8eefa"></div>
<span class="t x" style="font-size:5.8px;color:#0c0c0c;-webkit-text-stroke:0.1px #0c0c0c;transform:translate(594.50px,102px) scaleX(0.9374);">Mixed</span>
<svg style="left:588.40px;top:101.70px" width="5.2" height="5.2" viewBox="0 0 10 10"><circle cx="5" cy="5" r="5" fill="#2b7de0"/><path d="M2.4 5.200 L4.300 7 L7.600 3.200" stroke="#fff" stroke-width="1.500" fill="none"/></svg>
<div class="a" style="left:613.80px;top:100.20px;width:25.30px;height:9.00px;background:linear-gradient(#fafafa,#ededed);border-right:1px solid #8d8d8d;border-top:1px solid #b9b9b9;border-left:1px solid #fbfbfb"></div>
<span class="t x" style="font-size:5.8px;color:#8a8a8a;transform:translate(616.50px,103px) scaleX(0.8123);">CI Solid</span>
<div class="a" style="left:639.00px;top:100.20px;width:27.00px;height:9.00px;background:linear-gradient(#fafafa,#ededed);border-right:1px solid #8d8d8d;border-top:1px solid #b9b9b9;border-left:1px solid #fbfbfb"></div>
<span class="t x" style="font-size:5.8px;color:#8a8a8a;transform:translate(641.50px,103px) scaleX(0.8087);">NC Solid</span>
<div class="a" style="left:666.00px;top:100.20px;width:38.00px;height:9.00px;background:linear-gradient(#f6f6f6,#dedede);border-right:1px solid #8d8d8d;border-top:1px solid #b9b9b9;border-left:1px solid #fbfbfb"></div>
<span class="t x" style="font-size:5.8px;color:#0c0c0c;-webkit-text-stroke:0.1px #0c0c0c;transform:translate(668.50px,103px) scaleX(0.8528);">Flash Options</span>
<div class="a" style="left:704.00px;top:100.20px;width:33.50px;height:9.00px;background:linear-gradient(#f6f6f6,#dedede);border-right:1px solid #8d8d8d;border-top:1px solid #b9b9b9;border-left:1px solid #fbfbfb"></div>
<span class="t x" style="font-size:5.8px;color:#0c0c0c;-webkit-text-stroke:0.1px #0c0c0c;transform:translate(707.00px,103px) scaleX(0.8342);">EO Options</span>
<div class="a" style="left:737.50px;top:100.20px;width:25.50px;height:9.00px;background:linear-gradient(#f6f6f6,#dedede);border-right:1px solid #8d8d8d;border-top:1px solid #b9b9b9;border-left:1px solid #fbfbfb"></div>
<span class="t x" style="font-size:5.8px;color:#0c0c0c;-webkit-text-stroke:0.1px #0c0c0c;transform:translate(740.00px,103px) scaleX(0.8649);">Costing</span>
<div class="a" style="left:763.00px;top:100.20px;width:32.30px;height:9.00px;background:linear-gradient(#f6f6f6,#dedede);border-right:1px solid #8d8d8d;border-top:1px solid #b9b9b9;border-left:1px solid #fbfbfb"></div>
<span class="t x" style="font-size:5.8px;color:#0c0c0c;-webkit-text-stroke:0.1px #0c0c0c;transform:translate(765.50px,103px) scaleX(0.8740);">Comments</span>
<svg style="left:587.40px;top:116.10px" width="7.2" height="7.2" viewBox="0 0 10 10"><circle cx="5" cy="5" r="4.500" fill="#f8fbff" stroke="#8d96a6" stroke-width=".9"/><path d="M3 5.800 L5 3.800 L7 5.800" stroke="#555" stroke-width="1" fill="none"/></svg>
<span class="t x" style="font-size:5.8px;color:#0c0c0c;-webkit-text-stroke:0.1px #0c0c0c;transform:translate(598.00px,118px) scaleX(0.8384);">Specifications</span>
<span class="t x" style="font-size:5.8px;color:#0c0c0c;-webkit-text-stroke:0.1px #0c0c0c;transform:translate(590.00px,131px) scaleX(0.8142);">Flash Type</span>
<div class="a" style="left:632.80px;top:128.70px;width:55.50px;height:8.30px;background:#fff;box-shadow:0 0 0 .6px #d3deec;border-radius:1px"></div>
<svg style="left:684.20px;top:132.15px" width="3.2" height="1.8" viewBox="0 0 3.2 1.8"><path d="M0 0 H3.2 L1.6 1.8Z" fill="#111"/></svg>
<span class="t x" style="font-size:5.8px;color:#1414e6;font-weight:bold;transform:translate(634.50px,131px) scaleX(0.8793);">Temperature</span>
<div class="a" style="left:691.00px;top:128.70px;width:55.60px;height:8.30px;background:#fff;box-shadow:0 0 0 .6px #d3deec;border-radius:1px"></div>
<svg style="left:742.40px;top:132.15px" width="3.2" height="1.8" viewBox="0 0 3.2 1.8"><path d="M0 0 H3.2 L1.6 1.8Z" fill="#111"/></svg>
<span class="t x" style="font-size:5.8px;color:#1414e6;font-weight:bold;transform:translate(692.50px,131px) scaleX(0.8055);">Pressure</span>
<div class="a" style="left:590.00px;top:144.00px;width:157.00px;height:70.00px;border:1px solid #b7c7de;border-radius:1.3px;box-shadow:inset .5px .5px 0 rgba(255,255,255,.7)"></div>
<div class="a" style="left:592.50px;top:143.00px;width:34.50px;height:5.00px;background:#ebf1fb"></div>
<span class="t x" style="font-size:5.8px;color:#0c0c0c;-webkit-text-stroke:0.1px #0c0c0c;transform:translate(594.00px,143px) scaleX(0.8212);">State variables</span>
<span class="t x" style="font-size:5.8px;color:#0c0c0c;-webkit-text-stroke:0.1px #0c0c0c;transform:translate(594.00px,152px) scaleX(0.8603);">Temperature</span>
<div class="a" style="left:644.80px;top:150.00px;width:43.50px;height:8.80px;background:#fff;box-shadow:0 0 0 .6px #d3deec;border-radius:1px"></div>
<span class="t x" style="font-size:5.8px;color:#1414e6;font-weight:bold;transform:translate(681.40px,152px) scaleX(0.8678);">25</span>
<div class="a" style="left:691.00px;top:150.00px;width:42.60px;height:8.80px;background:#fff;box-shadow:0 0 0 .6px #d3deec;border-radius:1px"></div>
<svg style="left:729.40px;top:153.70px" width="3.2" height="1.8" viewBox="0 0 3.2 1.8"><path d="M0 0 H3.2 L1.6 1.8Z" fill="#111"/></svg>
<span class="t x" style="font-size:5.8px;color:#1414e6;font-weight:bold;transform:translate(692.50px,152px);">F</span>
<span class="t x" style="font-size:5.8px;color:#0c0c0c;-webkit-text-stroke:0.1px #0c0c0c;transform:translate(594.00px,163px) scaleX(0.7973);">Pressure</span>
<div class="a" style="left:644.80px;top:160.60px;width:43.50px;height:8.80px;background:#fff;box-shadow:0 0 0 .6px #d3deec;border-radius:1px"></div>
<span class="t x" style="font-size:5.8px;color:#1414e6;font-weight:bold;transform:translate(681.40px,163px) scaleX(0.8678);">30</span>
<div class="a" style="left:691.00px;top:160.60px;width:42.60px;height:8.80px;background:#fff;box-shadow:0 0 0 .6px #d3deec;border-radius:1px"></div>
<svg style="left:729.40px;top:164.30px" width="3.2" height="1.8" viewBox="0 0 3.2 1.8"><path d="M0 0 H3.2 L1.6 1.8Z" fill="#111"/></svg>
<span class="t x" style="font-size:5.8px;color:#1414e6;font-weight:bold;transform:translate(692.50px,163px) scaleX(0.8304);">bar</span>
<span class="t x" style="font-size:5.8px;color:#0c0c0c;-webkit-text-stroke:0.1px #0c0c0c;transform:translate(594.00px,173px) scaleX(0.8690);">Vapor fraction</span>
<div class="a" style="left:644.80px;top:170.80px;width:43.50px;height:8.80px;background:#e7e6ea;box-shadow:0 0 0 .6px #d3d6de;border-radius:1px"></div>
<span class="t x" style="font-size:5.8px;color:#0c0c0c;-webkit-text-stroke:0.1px #0c0c0c;transform:translate(594.00px,184px) scaleX(0.8394);">Total flow basis</span>
<div class="a" style="left:644.80px;top:181.40px;width:43.50px;height:8.80px;background:#fff;box-shadow:0 0 0 .6px #d3deec;border-radius:1px"></div>
<svg style="left:684.20px;top:185.10px" width="3.2" height="1.8" viewBox="0 0 3.2 1.8"><path d="M0 0 H3.2 L1.6 1.8Z" fill="#111"/></svg>
<span class="t x" style="font-size:5.8px;color:#1414e6;font-weight:bold;transform:translate(646.50px,184px) scaleX(0.9456);">Mole</span>
<span class="t x" style="font-size:5.8px;color:#0c0c0c;-webkit-text-stroke:0.1px #0c0c0c;transform:translate(594.00px,194px) scaleX(0.8668);">Total flow rate</span>
<div class="a" style="left:644.80px;top:191.90px;width:43.50px;height:8.80px;background:#fff;box-shadow:0 0 0 .6px #d3deec;border-radius:1px"></div>
<span class="t x" style="font-size:5.8px;color:#1414e6;font-weight:bold;transform:translate(675.50px,194px) scaleX(0.8910);">1000</span>
<div class="a" style="left:691.00px;top:191.90px;width:42.60px;height:8.80px;background:#fff;box-shadow:0 0 0 .6px #d3deec;border-radius:1px"></div>
<svg style="left:729.40px;top:195.60px" width="3.2" height="1.8" viewBox="0 0 3.2 1.8"><path d="M0 0 H3.2 L1.6 1.8Z" fill="#111"/></svg>
<span class="t x" style="font-size:5.8px;color:#1414e6;font-weight:bold;transform:translate(692.50px,194px) scaleX(0.8962);">lbmol/hr</span>
<span class="t x" style="font-size:5.8px;color:#8a8a8a;transform:translate(594.00px,205px) scaleX(0.8271);">Solvent</span>
<div class="a" style="left:644.80px;top:202.20px;width:88.80px;height:8.80px;background:#e7e6ea;box-shadow:0 0 0 .6px #d3d6de;border-radius:1px"></div>
<svg style="left:729.40px;top:205.90px" width="3.2" height="1.8" viewBox="0 0 3.2 1.8"><path d="M0 0 H3.2 L1.6 1.8Z" fill="#b8b8b8"/></svg>
<div class="a" style="left:590.00px;top:221.00px;width:157.00px;height:47.00px;border:1px solid #b7c7de;border-radius:1.3px;box-shadow:inset .5px .5px 0 rgba(255,255,255,.7)"></div>
<div class="a" style="left:592.50px;top:219.30px;width:54.00px;height:5.00px;background:#e5edf8"></div>
<span class="t x" style="font-size:5.8px;color:#0c0c0c;-webkit-text-stroke:0.1px #0c0c0c;transform:translate(594.00px,220px) scaleX(0.8389);">Reference Temperature</span>
<span class="t x" style="font-size:5.8px;color:#0c0c0c;-webkit-text-stroke:0.1px #0c0c0c;transform:translate(594.00px,229px) scaleX(0.8644);">Volume flow reference temperature</span>
<div class="a" style="left:594.00px;top:236.30px;width:24.40px;height:9.00px;background:#e7e6ea;box-shadow:0 0 0 .6px #d3d6de;border-radius:1px"></div>
<div class="a" style="left:620.30px;top:236.30px;width:37.70px;height:9.00px;background:#e7e6ea;box-shadow:0 0 0 .6px #d3d6de;border-radius:1px"></div>
<svg style="left:653.20px;top:240.10px" width="3.2" height="1.8" viewBox="0 0 3.2 1.8"><path d="M0 0 H3.2 L1.6 1.8Z" fill="#b8b8b8"/></svg>
<span class="t x" style="font-size:5.8px;color:#8a8a8a;transform:translate(623.00px,239px);">C</span>
<div class="a" style="left:594.00px;top:256.50px;width:24.40px;height:9.00px;background:#e7e6ea;box-shadow:0 0 0 .6px #d3d6de;border-radius:1px"></div>
<div class="a" style="left:620.30px;top:256.50px;width:37.70px;height:9.00px;background:#e7e6ea;box-shadow:0 0 0 .6px #d3d6de;border-radius:1px"></div>
<svg style="left:653.20px;top:260.30px" width="3.2" height="1.8" viewBox="0 0 3.2 1.8"><path d="M0 0 H3.2 L1.6 1.8Z" fill="#b8b8b8"/></svg>
<span class="t x" style="font-size:5.8px;color:#8a8a8a;transform:translate(623.00px,259px);">C</span>
<span class="t x" style="font-size:5.8px;color:#0c0c0c;-webkit-text-stroke:0.1px #0c0c0c;transform:translate(594.00px,249px) scaleX(0.8775);">Component concentration reference temperature</span>
<div class="a" style="left:751.00px;top:131.00px;width:114.00px;height:137.00px;border:1px solid #b7c7de;border-radius:1.3px;box-shadow:inset .5px .5px 0 rgba(255,255,255,.7)"></div>
<div class="a" style="left:753.50px;top:129.70px;width:32.00px;height:5.00px;background:#ebf1fb"></div>
<span class="t x" style="font-size:5.8px;color:#0c0c0c;-webkit-text-stroke:0.1px #0c0c0c;transform:translate(755.00px,130px) scaleX(0.8997);">Composition</span>
<div class="a" style="left:755.50px;top:136.60px;width:51.80px;height:8.40px;background:#fff;box-shadow:0 0 0 .6px #d3deec;border-radius:1px"></div>
<svg style="left:803.00px;top:140.10px" width="3.2" height="1.8" viewBox="0 0 3.2 1.8"><path d="M0 0 H3.2 L1.6 1.8Z" fill="#111"/></svg>
<span class="t x" style="font-size:5.8px;color:#1414e6;font-weight:bold;transform:translate(757.00px,139px) scaleX(0.8820);">Mole-Flow</span>
<div class="a" style="left:809.80px;top:136.60px;width:52.70px;height:8.40px;background:#fff;box-shadow:0 0 0 .6px #d3deec;border-radius:1px"></div>
<svg style="left:858.00px;top:140.10px" width="3.2" height="1.8" viewBox="0 0 3.2 1.8"><path d="M0 0 H3.2 L1.6 1.8Z" fill="#111"/></svg>
<span class="t x" style="font-size:5.8px;color:#1414e6;font-weight:bold;transform:translate(811.00px,139px) scaleX(0.9075);">kmol/hr</span>
<div class="a" style="left:754.70px;top:149.40px;width:108.10px;height:102.90px;border:1px solid #93a9c8;background:linear-gradient(#e9f0fa,#dfe9f6)"></div>
<div class="a" style="left:755.50px;top:150.20px;width:106.50px;height:12.20px;background:linear-gradient(#ffffff,#eeeeee);border-bottom:1px solid #d9d9d9"></div>
<div class="a" style="left:765.50px;top:150.20px;width:0.70px;height:12.20px;background:#dcdcdc"></div>
<div class="a" style="left:809.50px;top:150.20px;width:0.70px;height:12.20px;background:#dcdcdc"></div>
<svg style="left:761.30px;top:157.80px" width="3.2" height="3.2" viewBox="0 0 3 3"><path d="M3 0 V3 H0Z" fill="#c4c4c4"/></svg>
<div class="a" style="left:755.50px;top:162.40px;width:106.50px;height:10.90px;background:#fff"></div>
<div class="a" style="left:765.50px;top:162.40px;width:44.00px;height:10.90px;background:#fefee2"></div>
<div class="a" style="left:755.50px;top:162.40px;width:10.00px;height:10.90px;background:#f7f7f7;border-top:1px solid #e2e2e2"></div>
<svg style="left:759.50px;top:166.35px" width="2" height="3" viewBox="0 0 2 3"><path d="M0 0 L2 1.500 L0 3Z" fill="#c2c2c2"/></svg>
<div class="a" style="left:765.50px;top:162.40px;width:0.60px;height:10.90px;background:#e6e6e6"></div>
<div class="a" style="left:809.50px;top:162.40px;width:0.60px;height:10.90px;background:#ececec"></div>
<span class="t x" style="font-size:5.8px;color:#8c8c8c;transform:translate(767.30px,166px) scaleX(0.8129);">WATER</span>
<div class="a" style="left:755.50px;top:173.30px;width:106.50px;height:11.10px;background:#f3f8fd"></div>
<div class="a" style="left:755.50px;top:173.30px;width:10.00px;height:11.10px;background:#f7f7f7;border-top:1px solid #e2e2e2"></div>
<svg style="left:759.50px;top:177.35px" width="2" height="3" viewBox="0 0 2 3"><path d="M0 0 L2 1.500 L0 3Z" fill="#c2c2c2"/></svg>
<div class="a" style="left:765.50px;top:173.30px;width:0.60px;height:11.10px;background:#e6e6e6"></div>
<div class="a" style="left:809.50px;top:173.30px;width:0.60px;height:11.10px;background:#ececec"></div>
<span class="t x" style="font-size:5.8px;color:#8c8c8c;transform:translate(767.30px,177px) scaleX(0.7569);">ISOPROP</span>
<span class="t x" style="font-size:5.8px;color:#1414e6;font-weight:bold;transform:translate(850.00px,177px) scaleX(0.8930);">0.5</span>
<div class="a" style="left:755.50px;top:184.40px;width:106.50px;height:10.40px;background:#fff"></div>
<div class="a" style="left:755.50px;top:184.40px;width:10.00px;height:10.40px;background:#f7f7f7;border-top:1px solid #e2e2e2"></div>
<svg style="left:759.50px;top:188.10px" width="2" height="3" viewBox="0 0 2 3"><path d="M0 0 L2 1.500 L0 3Z" fill="#c2c2c2"/></svg>
<div class="a" style="left:765.50px;top:184.40px;width:0.60px;height:10.40px;background:#e6e6e6"></div>
<div class="a" style="left:809.50px;top:184.40px;width:0.60px;height:10.40px;background:#ececec"></div>
<span class="t x" style="font-size:5.8px;color:#8c8c8c;transform:translate(767.30px,188px) scaleX(0.8109);">PENTANOL</span>
<span class="t x" style="font-size:5.8px;color:#1414e6;font-weight:bold;transform:translate(847.00px,188px) scaleX(0.9029);">0.25</span>
<span class="t x" style="font-size:5.8px;color:#333;-webkit-text-stroke:0.1px #333;transform:translate(773.50px,155px) scaleX(0.8838);">Component</span>
<span class="t x" style="font-size:5.8px;color:#333;-webkit-text-stroke:0.1px #333;transform:translate(829.00px,155px) scaleX(0.8330);">Value</span>
<span class="t x" style="font-size:5.8px;color:#0c0c0c;font-weight:bold;-webkit-text-stroke:0.1px #0c0c0c;transform:translate(796.00px,259px) scaleX(0.7451);">Total</span>
<div class="a" style="left:808.90px;top:257.00px;width:50.80px;height:8.60px;background:#fff;box-shadow:0 0 0 .6px #d3deec;border-radius:1px"></div>
<span class="t x" style="font-size:5.8px;color:#a8a8a8;transform:translate(849.50px,259px) scaleX(0.7524);">1.25</span>
<span class="t x" style="font-size:11px;color:#111;-webkit-text-stroke:0.3px #111;transform:translate(586.20px,290px) scaleX(1.0080);">Figure 1.2: Feed stream inputs</span>
<div class="a" style="left:172.20px;top:322.20px;width:291.80px;height:170.20px;background:linear-gradient(#eef4fc,#dde8f6)"></div>
<div class="a" style="left:172.20px;top:322.20px;width:291.80px;height:9.60px;background:#bccde7"></div>
<div class="a" style="left:172.20px;top:322.20px;width:291.80px;height:1.20px;background:#aab6c8"></div>
<div class="a" style="left:172.20px;top:322.20px;width:5.40px;height:170.20px;background:linear-gradient(#d0dcee,#dbe5f3)"></div>
<div class="a" style="left:172.20px;top:322.20px;width:1.30px;height:170.20px;background:#9aa5b5"></div>
<div class="a" style="left:173.50px;top:323.20px;width:1.00px;height:169.20px;background:#c9d3e2"></div>
<div class="a" style="left:177.50px;top:323.40px;width:28.80px;height:9.00px;background:#fdfeff;border-left:1px solid #5c6fc4;border-right:1px solid #5c6fc4;border-top:1px solid #e8eefa"></div>
<span class="t x" style="font-size:5.5px;color:#0c0c0c;-webkit-text-stroke:0.1px #0c0c0c;transform:translate(187.00px,325px) scaleX(0.9883);">Mixed</span>
<svg style="left:181.00px;top:324.90px" width="4.8" height="4.8" viewBox="0 0 10 10"><circle cx="5" cy="5" r="5" fill="#2b7de0"/><path d="M2.4 5.200 L4.300 7 L7.600 3.200" stroke="#fff" stroke-width="1.500" fill="none"/></svg>
<div class="a" style="left:207.00px;top:324.00px;width:23.80px;height:7.80px;background:linear-gradient(#fafafa,#ededed);border-right:1px solid #8d8d8d;border-top:1px solid #b9b9b9;border-left:1px solid #fbfbfb"></div>
<span class="t x" style="font-size:5.5px;color:#8a8a8a;transform:translate(209.00px,326px) scaleX(0.8305);">CI Solid</span>
<div class="a" style="left:230.80px;top:324.00px;width:28.00px;height:7.80px;background:linear-gradient(#fafafa,#ededed);border-right:1px solid #8d8d8d;border-top:1px solid #b9b9b9;border-left:1px solid #fbfbfb"></div>
<span class="t x" style="font-size:5.5px;color:#8a8a8a;transform:translate(233.50px,326px) scaleX(0.8985);">NC Solid</span>
<div class="a" style="left:258.80px;top:324.00px;width:39.20px;height:7.80px;background:linear-gradient(#f6f6f6,#dedede);border-right:1px solid #8d8d8d;border-top:1px solid #b9b9b9;border-left:1px solid #fbfbfb"></div>
<span class="t x" style="font-size:5.5px;color:#0c0c0c;-webkit-text-stroke:0.1px #0c0c0c;transform:translate(261.50px,326px) scaleX(0.8987);">Flash Options</span>
<div class="a" style="left:298.00px;top:324.00px;width:32.80px;height:7.80px;background:linear-gradient(#f6f6f6,#dedede);border-right:1px solid #8d8d8d;border-top:1px solid #b9b9b9;border-left:1px solid #fbfbfb"></div>
<span class="t x" style="font-size:5.5px;color:#0c0c0c;-webkit-text-stroke:0.1px #0c0c0c;transform:translate(300.50px,326px) scaleX(0.8791);">EO Options</span>
<div class="a" style="left:330.80px;top:324.00px;width:25.60px;height:7.80px;background:linear-gradient(#f6f6f6,#dedede);border-right:1px solid #8d8d8d;border-top:1px solid #b9b9b9;border-left:1px solid #fbfbfb"></div>
<span class="t x" style="font-size:5.5px;color:#0c0c0c;-webkit-text-stroke:0.1px #0c0c0c;transform:translate(334.00px,326px) scaleX(0.9112);">Costing</span>
<div class="a" style="left:356.40px;top:324.00px;width:33.90px;height:7.80px;background:linear-gradient(#f6f6f6,#dedede);border-right:1px solid #8d8d8d;border-top:1px solid #b9b9b9;border-left:1px solid #fbfbfb"></div>
<span class="t x" style="font-size:5.5px;color:#0c0c0c;-webkit-text-stroke:0.1px #0c0c0c;transform:translate(359.50px,326px) scaleX(0.9401);">Comments</span>
<svg style="left:179.70px;top:337.70px" width="6.6" height="6.6" viewBox="0 0 10 10"><circle cx="5" cy="5" r="4.500" fill="#f8fbff" stroke="#8d96a6" stroke-width=".9"/><path d="M3 5.800 L5 3.800 L7 5.800" stroke="#555" stroke-width="1" fill="none"/></svg>
<span class="t x" style="font-size:5.5px;color:#0c0c0c;-webkit-text-stroke:0.1px #0c0c0c;transform:translate(190.00px,339px) scaleX(0.9134);">Specifications</span>
<span class="t x" style="font-size:5.5px;color:#0c0c0c;-webkit-text-stroke:0.1px #0c0c0c;transform:translate(182.00px,351px) scaleX(0.8578);">Flash Type</span>
<div class="a" style="left:225.60px;top:348.60px;width:56.00px;height:7.70px;background:#fff;box-shadow:0 0 0 .6px #d3deec;border-radius:1px"></div>
<svg style="left:277.40px;top:351.75px" width="3.2" height="1.8" viewBox="0 0 3.2 1.8"><path d="M0 0 H3.2 L1.6 1.8Z" fill="#111"/></svg>
<span class="t x" style="font-size:5.5px;color:#1414e6;font-weight:bold;transform:translate(227.30px,351px) scaleX(0.9325);">Temperature</span>
<div class="a" style="left:284.30px;top:348.60px;width:56.20px;height:7.70px;background:#fff;box-shadow:0 0 0 .6px #d3deec;border-radius:1px"></div>
<svg style="left:336.40px;top:351.75px" width="3.2" height="1.8" viewBox="0 0 3.2 1.8"><path d="M0 0 H3.2 L1.6 1.8Z" fill="#111"/></svg>
<span class="t x" style="font-size:5.5px;color:#1414e6;font-weight:bold;transform:translate(286.00px,351px) scaleX(0.8494);">Pressure</span>
<div class="a" style="left:182.00px;top:363.00px;width:159.00px;height:61.00px;border:1px solid #b7c7de;border-radius:1.3px;box-shadow:inset .5px .5px 0 rgba(255,255,255,.7)"></div>
<div class="a" style="left:184.50px;top:361.30px;width:35.00px;height:5.00px;background:#ebf1fb"></div>
<span class="t x" style="font-size:5.5px;color:#0c0c0c;-webkit-text-stroke:0.1px #0c0c0c;transform:translate(186.00px,362px) scaleX(0.8793);">State variables</span>
<span class="t x" style="font-size:5.5px;color:#0c0c0c;-webkit-text-stroke:0.1px #0c0c0c;transform:translate(186.00px,369px) scaleX(0.9064);">Temperature</span>
<div class="a" style="left:237.70px;top:367.70px;width:43.90px;height:7.60px;background:#fff;box-shadow:0 0 0 .6px #d3deec;border-radius:1px"></div>
<span class="t x" style="font-size:5.5px;color:#1414e6;font-weight:bold;transform:translate(274.90px,370px) scaleX(0.8816);">50</span>
<div class="a" style="left:284.30px;top:367.70px;width:42.90px;height:7.60px;background:#fff;box-shadow:0 0 0 .6px #d3deec;border-radius:1px"></div>
<svg style="left:323.00px;top:370.80px" width="3.2" height="1.8" viewBox="0 0 3.2 1.8"><path d="M0 0 H3.2 L1.6 1.8Z" fill="#111"/></svg>
<span class="t x" style="font-size:5.5px;color:#1414e6;font-weight:bold;transform:translate(285.80px,370px);">F</span>
<span class="t x" style="font-size:5.5px;color:#0c0c0c;-webkit-text-stroke:0.1px #0c0c0c;transform:translate(186.00px,379px) scaleX(0.8403);">Pressure</span>
<div class="a" style="left:237.70px;top:377.00px;width:43.90px;height:7.60px;background:#fff;box-shadow:0 0 0 .6px #d3deec;border-radius:1px"></div>
<div class="a" style="left:284.30px;top:377.00px;width:42.90px;height:7.60px;background:#fff;box-shadow:0 0 0 .6px #d3deec;border-radius:1px"></div>
<svg style="left:323.00px;top:380.10px" width="3.2" height="1.8" viewBox="0 0 3.2 1.8"><path d="M0 0 H3.2 L1.6 1.8Z" fill="#111"/></svg>
<span class="t x" style="font-size:5.5px;color:#1414e6;font-weight:bold;transform:translate(285.80px,379px) scaleX(0.8398);">psig</span>
<span class="t x" style="font-size:5.5px;color:#0c0c0c;-webkit-text-stroke:0.1px #0c0c0c;transform:translate(186.00px,388px) scaleX(0.9160);">Vapor fraction</span>
<div class="a" style="left:237.70px;top:386.00px;width:43.90px;height:7.60px;background:#e7e6ea;box-shadow:0 0 0 .6px #d3d6de;border-radius:1px"></div>
<span class="t x" style="font-size:5.5px;color:#0c0c0c;-webkit-text-stroke:0.1px #0c0c0c;transform:translate(186.00px,397px) scaleX(0.8982);">Total flow basis</span>
<div class="a" style="left:237.70px;top:395.20px;width:43.90px;height:7.70px;background:#fff;box-shadow:0 0 0 .6px #d3deec;border-radius:1px"></div>
<svg style="left:277.40px;top:398.35px" width="3.2" height="1.8" viewBox="0 0 3.2 1.8"><path d="M0 0 H3.2 L1.6 1.8Z" fill="#111"/></svg>
<span class="t x" style="font-size:5.5px;color:#1414e6;font-weight:bold;transform:translate(239.30px,397px) scaleX(0.9337);">Mole</span>
<span class="t x" style="font-size:5.5px;color:#0c0c0c;-webkit-text-stroke:0.1px #0c0c0c;transform:translate(186.00px,406px) scaleX(0.9282);">Total flow rate</span>
<div class="a" style="left:237.70px;top:404.60px;width:43.90px;height:7.60px;background:#fff;box-shadow:0 0 0 .6px #d3deec;border-radius:1px"></div>
<span class="t x" style="font-size:5.5px;color:#1414e6;font-weight:bold;transform:translate(269.10px,406px) scaleX(0.9143);">1000</span>
<div class="a" style="left:284.30px;top:404.60px;width:42.90px;height:7.60px;background:#fff;box-shadow:0 0 0 .6px #d3deec;border-radius:1px"></div>
<svg style="left:323.00px;top:407.70px" width="3.2" height="1.8" viewBox="0 0 3.2 1.8"><path d="M0 0 H3.2 L1.6 1.8Z" fill="#111"/></svg>
<span class="t x" style="font-size:5.5px;color:#1414e6;font-weight:bold;transform:translate(285.80px,406px) scaleX(0.9157);">kmol/hr</span>
<span class="t x" style="font-size:5.5px;color:#8a8a8a;transform:translate(186.00px,415px) scaleX(0.8715);">Solvent</span>
<div class="a" style="left:237.70px;top:413.50px;width:89.50px;height:7.60px;background:#e7e6ea;box-shadow:0 0 0 .6px #d3d6de;border-radius:1px"></div>
<svg style="left:323.00px;top:416.60px" width="3.2" height="1.8" viewBox="0 0 3.2 1.8"><path d="M0 0 H3.2 L1.6 1.8Z" fill="#b8b8b8"/></svg>
<div class="a" style="left:182.00px;top:430.00px;width:159.00px;height:42.00px;border:1px solid #b7c7de;border-radius:1.3px;box-shadow:inset .5px .5px 0 rgba(255,255,255,.7)"></div>
<div class="a" style="left:184.50px;top:428.30px;width:54.00px;height:5.00px;background:#e5edf8"></div>
<span class="t x" style="font-size:5.5px;color:#0c0c0c;-webkit-text-stroke:0.1px #0c0c0c;transform:translate(186.00px,429px) scaleX(0.8841);">Reference Temperature</span>
<span class="t x" style="font-size:5.5px;color:#0c0c0c;-webkit-text-stroke:0.1px #0c0c0c;transform:translate(186.00px,437px) scaleX(0.9228);">Volume flow reference temperature</span>
<div class="a" style="left:186.30px;top:443.40px;width:24.50px;height:8.00px;background:#e7e6ea;box-shadow:0 0 0 .6px #d3d6de;border-radius:1px"></div>
<div class="a" style="left:212.80px;top:443.40px;width:37.80px;height:8.00px;background:#e7e6ea;box-shadow:0 0 0 .6px #d3d6de;border-radius:1px"></div>
<svg style="left:246.00px;top:446.70px" width="3.2" height="1.8" viewBox="0 0 3.2 1.8"><path d="M0 0 H3.2 L1.6 1.8Z" fill="#b8b8b8"/></svg>
<span class="t x" style="font-size:5.5px;color:#8a8a8a;transform:translate(215.20px,446px);">C</span>
<div class="a" style="left:186.30px;top:461.40px;width:24.50px;height:8.00px;background:#e7e6ea;box-shadow:0 0 0 .6px #d3d6de;border-radius:1px"></div>
<div class="a" style="left:212.80px;top:461.40px;width:37.80px;height:8.00px;background:#e7e6ea;box-shadow:0 0 0 .6px #d3d6de;border-radius:1px"></div>
<svg style="left:246.00px;top:464.70px" width="3.2" height="1.8" viewBox="0 0 3.2 1.8"><path d="M0 0 H3.2 L1.6 1.8Z" fill="#b8b8b8"/></svg>
<span class="t x" style="font-size:5.5px;color:#8a8a8a;transform:translate(215.20px,464px);">C</span>
<span class="t x" style="font-size:5.5px;color:#0c0c0c;-webkit-text-stroke:0.1px #0c0c0c;transform:translate(186.00px,454px) scaleX(0.9333);">Component concentration reference temperature</span>
<div class="a" style="left:346.00px;top:350.00px;width:115.00px;height:122.00px;border:1px solid #b7c7de;border-radius:1.3px;box-shadow:inset .5px .5px 0 rgba(255,255,255,.7)"></div>
<div class="a" style="left:347.80px;top:349.00px;width:31.70px;height:5.00px;background:#ebf1fb"></div>
<span class="t x" style="font-size:5.5px;color:#0c0c0c;-webkit-text-stroke:0.1px #0c0c0c;transform:translate(349.30px,349px) scaleX(0.9386);">Composition</span>
<div class="a" style="left:349.40px;top:355.80px;width:52.80px;height:7.80px;background:#fff;box-shadow:0 0 0 .6px #d3deec;border-radius:1px"></div>
<svg style="left:397.90px;top:359.00px" width="3.2" height="1.8" viewBox="0 0 3.2 1.8"><path d="M0 0 H3.2 L1.6 1.8Z" fill="#111"/></svg>
<span class="t x" style="font-size:5.5px;color:#1414e6;font-weight:bold;transform:translate(351.00px,358px) scaleX(0.9236);">Mole-Frac</span>
<div class="a" style="left:404.20px;top:355.80px;width:53.10px;height:7.80px;background:#e7e6ea;box-shadow:0 0 0 .6px #d3d6de;border-radius:1px"></div>
<svg style="left:453.00px;top:359.00px" width="3.2" height="1.8" viewBox="0 0 3.2 1.8"><path d="M0 0 H3.2 L1.6 1.8Z" fill="#b8b8b8"/></svg>
<div class="a" style="left:349.00px;top:367.50px;width:108.70px;height:89.80px;border:1px solid #93a9c8;background:linear-gradient(#e9f0fa,#dfe9f6)"></div>
<div class="a" style="left:349.80px;top:368.30px;width:107.10px;height:10.10px;background:linear-gradient(#ffffff,#eeeeee);border-bottom:1px solid #d9d9d9"></div>
<div class="a" style="left:359.50px;top:368.30px;width:0.70px;height:10.10px;background:#dcdcdc"></div>
<div class="a" style="left:404.00px;top:368.30px;width:0.70px;height:10.10px;background:#dcdcdc"></div>
<svg style="left:355.30px;top:373.80px" width="3.2" height="3.2" viewBox="0 0 3 3"><path d="M3 0 V3 H0Z" fill="#c4c4c4"/></svg>
<div class="a" style="left:349.80px;top:378.40px;width:107.10px;height:9.50px;background:#fff"></div>
<div class="a" style="left:359.50px;top:378.40px;width:44.50px;height:9.50px;background:#fefee2"></div>
<div class="a" style="left:349.80px;top:378.40px;width:9.70px;height:9.50px;background:linear-gradient(90deg,#fdeb9a,#f5c42c)"></div>
<svg style="left:353.65px;top:381.65px" width="2" height="3" viewBox="0 0 2 3"><path d="M0 0 L2 1.500 L0 3Z" fill="#111"/></svg>
<div class="a" style="left:359.50px;top:378.40px;width:0.60px;height:9.50px;background:#e6e6e6"></div>
<div class="a" style="left:404.00px;top:378.40px;width:0.60px;height:9.50px;background:#ececec"></div>
<span class="t x" style="font-size:5.5px;color:#8c8c8c;transform:translate(361.30px,381px) scaleX(0.8312);">WATER</span>
<span class="t x" style="font-size:5.5px;color:#1414e6;font-weight:bold;transform:translate(442.00px,381px) scaleX(0.9329);">0.25</span>
<div class="a" style="left:349.80px;top:387.90px;width:107.10px;height:9.50px;background:#f3f8fd"></div>
<div class="a" style="left:349.80px;top:387.90px;width:9.70px;height:9.50px;background:#f7f7f7;border-top:1px solid #e2e2e2"></div>
<svg style="left:353.65px;top:391.15px" width="2" height="3" viewBox="0 0 2 3"><path d="M0 0 L2 1.500 L0 3Z" fill="#c2c2c2"/></svg>
<div class="a" style="left:359.50px;top:387.90px;width:0.60px;height:9.50px;background:#e6e6e6"></div>
<div class="a" style="left:404.00px;top:387.90px;width:0.60px;height:9.50px;background:#ececec"></div>
<span class="t x" style="font-size:5.5px;color:#8c8c8c;transform:translate(361.30px,391px) scaleX(0.8180);">ISOPROP</span>
<span class="t x" style="font-size:5.5px;color:#1414e6;font-weight:bold;transform:translate(442.00px,391px) scaleX(0.9329);">0.25</span>
<div class="a" style="left:349.80px;top:397.40px;width:107.10px;height:9.60px;background:#fff"></div>
<div class="a" style="left:349.80px;top:397.40px;width:9.70px;height:9.60px;background:#f7f7f7;border-top:1px solid #e2e2e2"></div>
<svg style="left:353.65px;top:400.70px" width="2" height="3" viewBox="0 0 2 3"><path d="M0 0 L2 1.500 L0 3Z" fill="#c2c2c2"/></svg>
<div class="a" style="left:359.50px;top:397.40px;width:0.60px;height:9.60px;background:#e6e6e6"></div>
<div class="a" style="left:404.00px;top:397.40px;width:0.60px;height:9.60px;background:#ececec"></div>
<span class="t x" style="font-size:5.5px;color:#8c8c8c;transform:translate(361.30px,400px) scaleX(0.8547);">PENTANOL</span>
<span class="t x" style="font-size:5.5px;color:#1414e6;font-weight:bold;transform:translate(445.00px,400px) scaleX(0.9143);">0.5</span>
<span class="t x" style="font-size:5.5px;color:#333;-webkit-text-stroke:0.1px #333;transform:translate(368.00px,371px) scaleX(0.9319);">Component</span>
<span class="t x" style="font-size:5.5px;color:#333;-webkit-text-stroke:0.1px #333;transform:translate(424.00px,371px) scaleX(0.8777);">Value</span>
<span class="t x" style="font-size:5.5px;color:#0c0c0c;font-weight:bold;-webkit-text-stroke:0.1px #0c0c0c;transform:translate(390.50px,463px) scaleX(0.8245);">Total</span>
<div class="a" style="left:403.80px;top:461.30px;width:51.20px;height:8.20px;background:#fff;box-shadow:0 0 0 .6px #d3deec;border-radius:1px"></div>
<span class="t x" style="font-size:5.5px;color:#a8a8a8;transform:translate(450.14px,463px);">1</span>
<span class="t x" style="font-size:11px;color:#111;-webkit-text-stroke:0.3px #111;transform:translate(178.40px,499px) scaleX(1.0205);">Figure 1.3: Pentanol stream inputs</span>
<div class="a" style="left:579.00px;top:322.20px;width:292.20px;height:156.40px;background:linear-gradient(#eef4fc,#dde8f6)"></div>
<div class="a" style="left:579.00px;top:322.20px;width:292.20px;height:3.20px;background:#d3deee"></div>
<div class="a" style="left:579.00px;top:322.20px;width:292.20px;height:1.00px;background:#a7b4c6"></div>
<div class="a" style="left:579.00px;top:325.40px;width:292.20px;height:11.20px;background:#bccde7"></div>
<div class="a" style="left:579.00px;top:325.40px;width:6.50px;height:153.20px;background:linear-gradient(#d0dcee,#dbe5f3)"></div>
<div class="a" style="left:579.00px;top:322.20px;width:1.30px;height:156.40px;background:#9aa5b5"></div>
<div class="a" style="left:580.30px;top:323.20px;width:1.00px;height:155.40px;background:#c9d3e2"></div>
<div class="a" style="left:579.00px;top:478.60px;width:292.20px;height:14.40px;background:#dbe6f4"></div>
<div class="a" style="left:579.00px;top:478.60px;width:1.30px;height:14.40px;background:#c4d0e0"></div>
<div class="a" style="left:586.00px;top:326.20px;width:58.60px;height:11.00px;background:#fdfeff;border-left:1px solid #5c6fc4;border-right:1px solid #5c6fc4;border-top:1px solid #e8eefa"></div>
<span class="t x" style="font-size:5.9px;color:#0c0c0c;-webkit-text-stroke:0.1px #0c0c0c;transform:translate(599.00px,330px) scaleX(1.0864);">Specifications</span>
<svg style="left:591.3px;top:328.5px" width="5.800" height="5.800" viewBox="0 0 10 10"><circle cx="5" cy="5" r="4.600" fill="#fff" stroke="#d81e1e" stroke-width=".8"/><path d="M.4 5 A4.600 4.600 0 0 0 9.600 5Z" fill="#e01b1b"/></svg>
<div class="a" style="left:645.40px;top:326.80px;width:66.60px;height:9.80px;background:linear-gradient(#f6f6f6,#dedede);border-right:1px solid #8d8d8d;border-top:1px solid #b9b9b9;border-left:1px solid #fbfbfb"></div>
<span class="t x" style="font-size:5.9px;color:#0c0c0c;-webkit-text-stroke:0.1px #0c0c0c;transform:translate(648.00px,330px) scaleX(1.1156);">Calculation Options</span>
<div class="a" style="left:712.00px;top:326.80px;width:38.00px;height:9.80px;background:linear-gradient(#f6f6f6,#dedede);border-right:1px solid #8d8d8d;border-top:1px solid #b9b9b9;border-left:1px solid #fbfbfb"></div>
<span class="t x" style="font-size:5.9px;color:#0c0c0c;-webkit-text-stroke:0.1px #0c0c0c;transform:translate(714.50px,330px) scaleX(1.1549);">Efficiency</span>
<div class="a" style="left:750.00px;top:326.80px;width:45.80px;height:9.80px;background:linear-gradient(#fafafa,#ededed);border-right:1px solid #8d8d8d;border-top:1px solid #b9b9b9;border-left:1px solid #fbfbfb"></div>
<span class="t x" style="font-size:5.9px;color:#8a8a8a;transform:translate(754.00px,330px) scaleX(1.0861);">Entrainment</span>
<div class="a" style="left:795.80px;top:326.80px;width:27.30px;height:9.80px;background:linear-gradient(#f6f6f6,#dedede);border-right:1px solid #8d8d8d;border-top:1px solid #b9b9b9;border-left:1px solid #fbfbfb"></div>
<span class="t x" style="font-size:5.9px;color:#0c0c0c;-webkit-text-stroke:0.1px #0c0c0c;transform:translate(799.00px,330px) scaleX(1.1453);">Utility</span>
<div class="a" style="left:823.10px;top:326.80px;width:42.20px;height:9.80px;background:linear-gradient(#f6f6f6,#dedede);border-right:1px solid #8d8d8d;border-top:1px solid #b9b9b9;border-left:1px solid #fbfbfb"></div>
<span class="t x" style="font-size:5.9px;color:#0c0c0c;-webkit-text-stroke:0.1px #0c0c0c;transform:translate(826.50px,330px) scaleX(1.1059);">Comments</span>
<div class="a" style="left:588.00px;top:346.00px;width:252.00px;height:40.00px;border:1px solid #b7c7de;border-radius:1.3px;box-shadow:inset .5px .5px 0 rgba(255,255,255,.7)"></div>
<div class="a" style="left:591.00px;top:344.00px;width:69.50px;height:5.00px;background:#ebf1fb"></div>
<span class="t x" style="font-size:5.9px;color:#0c0c0c;-webkit-text-stroke:0.1px #0c0c0c;transform:translate(592.50px,344px) scaleX(1.0918);">Decanter specifications</span>
<span class="t x" style="font-size:5.9px;color:#0c0c0c;-webkit-text-stroke:0.1px #0c0c0c;transform:translate(592.50px,354px);">Pressure</span>
<div class="a" style="left:693.40px;top:351.80px;width:58.60px;height:8.60px;background:#fff;box-shadow:0 0 0 .6px #d3deec;border-radius:1px"></div>
<div class="a" style="left:754.70px;top:351.80px;width:78.60px;height:8.60px;background:#fff;box-shadow:0 0 0 .6px #d3deec;border-radius:1px"></div>
<svg style="left:828.10px;top:355.40px" width="3.2" height="1.8" viewBox="0 0 3.2 1.8"><path d="M0 0 H3.2 L1.6 1.8Z" fill="#111"/></svg>
<span class="t x" style="font-size:5.9px;color:#1414e6;font-style:italic;transform:translate(756.50px,354px) scaleX(1.1156);">bar</span>
<svg style="left:592.30px;top:363.80px" width="6.4" height="6.4" viewBox="0 0 10 10"><circle cx="5" cy="5" r="4.400" fill="#e9e9e9" stroke="#8e8f8f" stroke-width="1"/><circle cx="5" cy="5" r="2.200" fill="#2a6fcf"/></svg>
<span class="t x" style="font-size:5.9px;color:#0c0c0c;-webkit-text-stroke:0.1px #0c0c0c;transform:translate(601.00px,365px) scaleX(1.0883);">Temperature</span>
<div class="a" style="left:693.40px;top:362.60px;width:58.60px;height:8.60px;background:#fff;box-shadow:0 0 0 .6px #d3deec;border-radius:1px"></div>
<div class="a" style="left:754.70px;top:362.60px;width:78.60px;height:8.60px;background:#fff;box-shadow:0 0 0 .6px #d3deec;border-radius:1px"></div>
<svg style="left:828.10px;top:366.20px" width="3.2" height="1.8" viewBox="0 0 3.2 1.8"><path d="M0 0 H3.2 L1.6 1.8Z" fill="#111"/></svg>
<span class="t x" style="font-size:5.9px;color:#1414e6;font-weight:bold;transform:translate(743.60px,365px) scaleX(1.0667);">75</span>
<span class="t x" style="font-size:5.9px;color:#1414e6;font-weight:bold;transform:translate(756.50px,365px);">F</span>
<svg style="left:592.30px;top:374.80px" width="6.4" height="6.4" viewBox="0 0 10 10"><circle cx="5" cy="5" r="4.400" fill="#e9e9e9" stroke="#8e8f8f" stroke-width="1"/></svg>
<span class="t x" style="font-size:5.9px;color:#0c0c0c;-webkit-text-stroke:0.1px #0c0c0c;transform:translate(601.00px,376px) scaleX(1.1134);">Duty</span>
<div class="a" style="left:693.40px;top:373.60px;width:58.60px;height:8.80px;background:#e7e6ea;box-shadow:0 0 0 .6px #d3d6de;border-radius:1px"></div>
<div class="a" style="left:754.70px;top:373.60px;width:78.60px;height:8.80px;background:#e7e6ea;box-shadow:0 0 0 .6px #d3d6de;border-radius:1px"></div>
<svg style="left:828.10px;top:377.30px" width="3.2" height="1.8" viewBox="0 0 3.2 1.8"><path d="M0 0 H3.2 L1.6 1.8Z" fill="#b8b8b8"/></svg>
<span class="t x" style="font-size:5.9px;color:#8a8a8a;font-style:italic;transform:translate(756.50px,376px) scaleX(1.0085);">cal/sec</span>
<div class="a" style="left:588.00px;top:394.00px;width:252.00px;height:60.00px;border:1px solid #b7c7de;border-radius:1.3px;box-shadow:inset .5px .5px 0 rgba(255,255,255,.7)"></div>
<div class="a" style="left:591.00px;top:392.00px;width:131.30px;height:5.00px;background:#e7eef9"></div>
<span class="t x" style="font-size:5.9px;color:#0c0c0c;-webkit-text-stroke:0.1px #0c0c0c;transform:translate(592.50px,392px) scaleX(1.1129);">Key components to identify 2nd liquid phase</span>
<span class="t x" style="font-size:5.9px;color:#0c0c0c;-webkit-text-stroke:0.1px #0c0c0c;transform:translate(592.50px,402px) scaleX(1.1037);">Available components</span>
<span class="t x" style="font-size:5.9px;color:#0c0c0c;-webkit-text-stroke:0.1px #0c0c0c;transform:translate(695.80px,402px) scaleX(1.0982);">Key components</span>
<div class="a" style="left:592.30px;top:409.40px;width:71.50px;height:41.20px;background:#fff;border:1px solid;border-color:#7f8389 #9b9fa5 #c5c9cf #7f8389"></div>
<div class="a" style="left:695.50px;top:409.40px;width:70.90px;height:41.20px;background:#fff;border:1px solid;border-color:#7f8389 #9b9fa5 #c5c9cf #7f8389"></div>
<span class="t x" style="font-size:5.6px;color:#2b2bea;font-style:italic;transform:translate(596.00px,413px) scaleX(1.0667);">WATER</span>
<span class="t x" style="font-size:5.6px;color:#2b2bea;font-style:italic;transform:translate(596.00px,421px) scaleX(1.0392);">ISOPROP</span>
<span class="t x" style="font-size:5.6px;color:#2b2bea;font-style:italic;transform:translate(596.00px,430px) scaleX(1.0756);">PENTANOL</span>
<div class="a" style="left:668.00px;top:401.00px;width:23.40px;height:10.00px;background:#f1f1f1;border:1px solid #cfcfcf;border-radius:1.5px"></div>
<span class="t x" style="font-size:5.0px;color:#b2b2b2;transform:translate(678.40px,404px) scaleX(0.8898);">&gt;</span>
<div class="a" style="left:668.00px;top:413.60px;width:23.40px;height:9.80px;background:linear-gradient(#f3f3f3,#d6d6d6);border:1px solid #7d7d7d;border-radius:1.5px"></div>
<span class="t x" style="font-size:5.0px;color:#222;transform:translate(676.10px,417px) scaleX(1.2321);">&gt;&gt;</span>
<div class="a" style="left:668.00px;top:425.80px;width:23.40px;height:10.00px;background:#f1f1f1;border:1px solid #cfcfcf;border-radius:1.5px"></div>
<span class="t x" style="font-size:5.0px;color:#b2b2b2;transform:translate(678.40px,429px) scaleX(0.8898);">&lt;</span>
<div class="a" style="left:668.00px;top:438.30px;width:23.40px;height:10.10px;background:#f1f1f1;border:1px solid #cfcfcf;border-radius:1.5px"></div>
<span class="t x" style="font-size:5.0px;color:#b2b2b2;transform:translate(676.10px,442px) scaleX(1.2321);">&lt;&lt;</span>
<div class="a" style="left:588.00px;top:461.00px;width:252.00px;height:18.00px;border:1px solid #b7c7de;border-radius:1.3px;box-shadow:inset .5px .5px 0 rgba(255,255,255,.7)"></div>
<div class="a" style="left:591.00px;top:459.60px;width:136.00px;height:5.00px;background:#dee8f5"></div>
<span class="t x" style="font-size:5.9px;color:#0c0c0c;-webkit-text-stroke:0.1px #0c0c0c;transform:translate(592.50px,460px) scaleX(1.1096);">Key component threshold for 2nd liquid phase</span>
<span class="t x" style="font-size:5.9px;color:#808287;transform:translate(592.50px,469px) scaleX(1.1320);">Component mole fraction</span>
<div class="a" style="left:677.50px;top:466.90px;width:40.90px;height:9.10px;background:#e7e6ea;box-shadow:0 0 0 .6px #d3d6de;border-radius:1px"></div>
<span class="t x" style="font-size:11px;color:#111;-webkit-text-stroke:0.3px #111;transform:translate(585.60px,499px) scaleX(1.0167);">Figure 1.4: Decanter inputs</span>
</div>
<div class="a" id="task"></div>
<svg style="left:11px;top:557px" width="13" height="13" viewBox="0 0 13 13"><defs><linearGradient id="mo" x1="0" y1="0" x2="0" y2="1"><stop offset="0" stop-color="#fbc02a"/><stop offset="1" stop-color="#f48a16"/></linearGradient></defs><path d="M8 .2 C13 2.500 12.500 10.500 6.200 11.600 C3.600 12 1.400 10.900 .2 9 C4.600 10.200 9.400 6 8 .2Z" fill="url(#mo)"/></svg>
<span class="t x" style="font-size:6.2px;color:#f4f4f4;transform:translate(27.60px,557px) scaleX(0.9401);">17°C</span>
<span class="t x" style="font-size:6.2px;color:#dcdcdc;transform:translate(27.60px,565px) scaleX(0.9732);">Clear</span>
<svg style="left:307.0px;top:557.0px" width="12" height="12" viewBox="0 0 12 12"><rect x="0" y="0" width="5.600" height="5.600" fill="#35c0f4"/><rect x="6.400" y="0" width="5.600" height="5.600" fill="#35c0f4"/><rect x="0" y="6.400" width="5.600" height="5.600" fill="#2fa6ee"/><rect x="6.400" y="6.400" width="5.600" height="5.600" fill="#2fa6ee"/></svg>
<svg style="left:330.0px;top:557.0px" width="12" height="12" viewBox="0 0 12 12"><circle cx="7" cy="5" r="3.700" stroke="#f0f0f0" stroke-width="1.500" fill="none"/><path d="M4.200 7.800 L1.300 10.700" stroke="#f0f0f0" stroke-width="1.700" stroke-linecap="round"/></svg>
<svg style="left:353.5px;top:557.0px" width="13" height="12" viewBox="0 0 13 12"><circle cx="6.500" cy="6" r="5.800" fill="#7b83eb"/><path d="M1.500 11.600 L2 8.500 L5 10.800Z" fill="#7b83eb"/><rect x="3.300" y="3.800" width="4.800" height="4.400" rx=".9" fill="#fff"/><path d="M8.400 5.300 L10.200 4.200 V7.800 L8.400 6.700Z" fill="#fff"/></svg>
<svg style="left:376.5px;top:556.5px" width="13" height="13" viewBox="0 0 13 13"><defs><linearGradient id="ed" x1="0" y1="0" x2="1" y2="1"><stop offset="0" stop-color="#35c1f1"/><stop offset=".5" stop-color="#1b9de2"/><stop offset="1" stop-color="#0c59a4"/></linearGradient></defs><circle cx="6.500" cy="6.500" r="6.300" fill="url(#ed)"/><path d="M.6 7.500 C.8 3.500 4 1.200 7.200 1.600 C10.200 2 11.800 4.200 11.900 6 C10.600 3.600 6.400 3.200 5 6 C3.800 8.600 5.600 11.400 8.400 11.900 C4.600 13.200 .8 11 .6 7.500Z" fill="#4bd66a" opacity=".85"/><path d="M5.200 6.800 C5.200 4.400 9.400 4 9.800 6.800 C10 8 8.800 8.800 7.600 8.400 C8.200 7.400 7 6.200 5.200 6.800Z" fill="#2b2419"/></svg>
<div class="a" style="left:381.6px;top:574px;width:2.800px;height:1px;background:#9a9a9a"></div>
<svg style="left:400.5px;top:557.5px" width="13" height="11" viewBox="0 0 13 11"><path d="M.4 1 H4.600 L5.800 2.400 H12.600 V10.600 H.4Z" fill="#f6b73a"/><rect x=".4" y="3.600" width="12.200" height="7" rx=".5" fill="#fcd667"/><rect x="3.600" y="7.200" width="5.800" height="3.400" fill="#3f8fd8"/></svg>
<svg style="left:424.0px;top:556.5px" width="14" height="13" viewBox="0 0 14 13"><path d="M.5 5.400 L6 2.400 L11.500 5.400 V12 H.5Z" fill="#1f8fe0"/><path d="M.5 5.600 L6 9 L11.500 5.600 V12 H.5Z" fill="#49b4f4"/><path d="M1.800 4.600 H10.200 V8 L6 10 L1.800 8Z" fill="#eaf5fd" opacity=".9"/><path d="M.5 12 L6 8 L11.500 12Z" fill="#2f9bea"/><circle cx="10.700" cy="3.200" r="3.900" fill="#2a7bd8"/></svg>
<span class="t x" style="font-size:5.2px;color:#fff;font-weight:bold;transform:translate(433.00px,556px) scaleX(0.9341);">74</span>
<svg style="left:448.0px;top:557.0px" width="12" height="12" viewBox="0 0 12 12"><rect width="12" height="12" fill="#0d5cf0"/><path d="M3.600 2.600 L6 4.100 L3.600 5.600 L1.200 4.100Z M8.400 2.600 L10.800 4.100 L8.400 5.600 L6 4.100Z M3.600 5.600 L6 7.100 L3.600 8.600 L1.200 7.100Z M8.400 5.600 L10.800 7.100 L8.400 8.600 L6 7.100Z M6 7.900 L7.800 9 L6 10.100 L4.200 9Z" fill="#fff"/></svg>
<svg style="left:471.0px;top:557.0px" width="12" height="12" viewBox="0 0 12 12"><rect width="12" height="12" fill="#050505"/><path d="M3.600 2 H5.200 L6.800 6.800 V2 H8.400 V10 H6.800 L5.200 5.400 V10 H3.600Z" fill="#e50914"/></svg>
<svg style="left:493.5px;top:557.0px" width="13" height="12" viewBox="0 0 13 12"><rect x="4" y="1" width="8.600" height="10" rx=".8" fill="#1a73c9"/><rect x="7" y="3" width="5.600" height="3" fill="#4bb1f2"/><rect x="7" y="6" width="5.600" height="3" fill="#2b8fe0"/><rect x=".3" y="3" width="7" height="7" rx=".8" fill="#0f5db3"/><circle cx="3.800" cy="6.500" r="1.700" stroke="#fff" stroke-width="1" fill="none"/></svg>
<svg style="left:517.5px;top:556.5px" width="13" height="13" viewBox="0 0 13 13"><rect x="6" y="1" width="6" height="9" rx=".8" fill="#4aa3e0" transform="rotate(12 9 5)"/><rect x="1.200" y="1.600" width="7.600" height="10.400" rx=".9" fill="#f4f4f4" transform="rotate(-8 5 7)"/><path d="M4.800 4 C6.800 5.600 7.400 7 6.300 7.800 C5.700 8.200 5.100 8 4.900 7.600 L5.200 9.200 H4.200 L4.500 7.600 C4.300 8 3.600 8.200 3 7.800 C2 7 2.800 5.600 4.800 4Z" fill="#15181b"/></svg>
<div class="a" style="left:536.5px;top:552px;width:21.500px;height:22.500px;background:#3c2a2c;border-radius:2px"></div>
<svg style="left:541.0px;top:557.0px" width="13" height="12" viewBox="0 0 13 12"><rect x="3.600" y=".6" width="9" height="10.800" rx=".8" fill="#2b7cd3"/><rect x="3.600" y=".6" width="9" height="3.600" fill="#41a5ee"/><rect x="3.600" y="7.800" width="9" height="3.600" fill="#185abd"/><rect x=".3" y="2.800" width="7" height="6.600" rx=".8" fill="#1652b0"/></svg>
<span class="t" style="left:541.700px;top:560px;font-size:5.600px;color:#fff;font-weight:bold">W</span>
<div class="a" style="left:545.5px;top:573.500px;width:3.500px;height:1.200px;background:#e58a94;border-radius:.6px"></div>
<svg style="left:564.5px;top:556.5px" width="13" height="13" viewBox="0 0 13 13"><path d="M4 3 V1.800 C4 .2 9 .2 9 1.800 V3" stroke="#38a5e8" stroke-width="1" fill="none"/><rect x=".8" y="3" width="11.400" height="9.400" rx="1.400" fill="#f3f3f3"/><rect x="3.800" y="5" width="2.300" height="2.300" fill="#f25022"/><rect x="6.900" y="5" width="2.300" height="2.300" fill="#7fba00"/><rect x="3.800" y="8" width="2.300" height="2.300" fill="#00a4ef"/><rect x="6.900" y="8" width="2.300" height="2.300" fill="#ffb900"/></svg>
<svg style="left:589.5px;top:556.5px" width="10" height="13" viewBox="0 0 10 13"><path d="M1 2.600 L6.400 1 V12 L1 12Z" fill="#f08a1c"/><path d="M6.400 1 L9 2.600 V12 H6.400Z" fill="#d9720f"/><rect x="4.600" y=".2" width="1.600" height="3.400" fill="#f6b05a"/></svg>
<div class="a" style="left:607px;top:552px;width:20.500px;height:22.500px;background:#3a3529;border-radius:2px"></div>
<div class="a" style="left:627.5px;top:552px;width:2.500px;height:22.500px;background:#353024;border-radius:0 2px 2px 0"></div>
<svg style="left:612.0px;top:556.5px" width="12" height="13" viewBox="0 0 12 13"><ellipse cx="6" cy="6.500" rx="5.600" ry="6.200" fill="#f01a2c"/><ellipse cx="6" cy="6.500" rx="2.300" ry="4.300" fill="#3a3529"/></svg>
<div class="a" style="left:614px;top:573.4px;width:8px;height:1.300px;background:#4cc2f0;border-radius:.6px"></div>
<svg style="left:635.0px;top:556.5px" width="13" height="13" viewBox="0 0 13 13"><circle cx="6.500" cy="6.500" r="6.300" fill="#e94335"/><path d="M6.500 6.500 L1.040 9.650 A6.300 6.300 0 0 0 9.650 11.960Z" fill="#34a853"/><path d="M6.500 6.500 L1.040 9.650 A6.300 6.300 0 0 1 1.040 3.350Z" fill="#34a853"/><path d="M6.500 6.500 L9.650 11.960 A6.300 6.300 0 0 0 11.960 3.350 L6.500 3.350Z" fill="#fbbc05"/><circle cx="6.500" cy="6.500" r="3" fill="#fff"/><circle cx="6.500" cy="6.500" r="2.300" fill="#4285f4"/></svg>
<div class="a" style="left:654px;top:552px;width:21.500px;height:22.500px;background:#3c2a2c;border-radius:2px"></div>
<svg style="left:658.0px;top:556.5px" width="13" height="13" viewBox="0 0 13 13"><circle cx="6.500" cy="6.500" r="6.200" fill="#1ed760"/><path d="M3 4.600 C5.400 3.900 8.200 4.100 10.300 5.300 M3.400 6.700 C5.400 6.100 7.800 6.300 9.600 7.400 M3.800 8.700 C5.400 8.300 7.200 8.400 8.800 9.300" stroke="#15181b" stroke-width="1.100" fill="none" stroke-linecap="round"/></svg>
<div class="a" style="left:663px;top:573.500px;width:3.500px;height:1.200px;background:#e58a94;border-radius:.6px"></div>
<div class="a" style="left:677.5px;top:552px;width:21.500px;height:22.500px;background:#3c2a2c;border-radius:2px"></div>
<svg style="left:681.5px;top:556.5px" width="13" height="13" viewBox="0 0 13 13"><circle cx="6.500" cy="6.500" r="6.200" fill="#5865f2"/><path d="M3.400 4.400 C5 3.600 8 3.600 9.600 4.400 C10.400 5.800 10.800 7.400 10.600 8.800 C9.800 9.400 9 9.700 8.400 9.800 L8 9.100 C7 9.400 6 9.400 5 9.100 L4.600 9.800 C4 9.700 3.200 9.400 2.400 8.800 C2.200 7.400 2.600 5.800 3.400 4.400Z" fill="#fff"/><ellipse cx="5.200" cy="7" rx=".8" ry=".9" fill="#5865f2"/><ellipse cx="7.800" cy="7" rx=".8" ry=".9" fill="#5865f2"/></svg>
<div class="a" style="left:686.5px;top:573.500px;width:3.500px;height:1.200px;background:#e58a94;border-radius:.6px"></div>
<svg style="left:705.0px;top:556.5px" width="14" height="13" viewBox="0 0 14 13"><circle cx="9.800" cy="3.600" r="1.900" fill="#5059c9"/><rect x="7.600" y="5.600" width="5" height="5" rx="1.600" fill="#5059c9"/><circle cx="6" cy="3" r="2.300" fill="#7b83eb"/><rect x="2.600" y="5.400" width="7" height="7" rx="1.800" fill="#7b83eb"/><rect x=".4" y="4.400" width="6" height="6" rx=".8" fill="#4b53bc"/><path d="M1.900 5.900 H4.900 M3.400 5.900 V9.200" stroke="#fff" stroke-width="1"/><circle cx="11.800" cy="1.800" r="2" fill="#8cc63e"/></svg>
<div class="a" style="left:710.5px;top:573.800px;width:3px;height:1px;background:#9a9a9a"></div>
<svg style="left:864.5px;top:561.5px" width="6" height="4" viewBox="0 0 6 4"><path d="M.4 3.500 L3 .700 L5.600 3.500" stroke="#f0f0f0" stroke-width=".8" fill="none"/></svg>
<svg style="left:876px;top:560.5px" width="9" height="6" viewBox="0 0 9 6"><path d="M2.200 5.600 C.2 5.600 .2 3 2 3 C2.200 1.200 4.600 .6 5.600 2.200 C7 1.800 7.600 3 7.200 3.600 C8.800 3.800 8.600 5.600 7.400 5.600Z" fill="#f0f0f0"/></svg>
<svg style="left:888.5px;top:558.5px" width="10" height="10" viewBox="0 0 10 10"><path d="M1 4.200 C1 2.400 2.200 1.200 4 1.200 H6.800 M6.800 1.200 L5.600 .2 M6.800 1.200 L5.600 2.300 M7.600 4.600 C7.600 6 7 7 5.600 7.400 M1 6 V7.400 H2.600" stroke="#f0f0f0" stroke-width=".8" fill="none"/><circle cx="6.600" cy="7" r="1.900" fill="#1f8bf2"/></svg>
<span class="t" style="left:909.5px;top:560.5px;font-size:6.5px;color:#e8e8e8">ع</span>
<svg style="left:927.5px;top:559.5px" width="9" height="7" viewBox="0 0 9 7"><path d="M.4 2.400 C2.600 .2 6.400 .2 8.600 2.400 M1.700 3.700 C3.300 2.200 5.700 2.200 7.300 3.700 M3 5 C3.900 4.200 5.100 4.200 6 5" stroke="#f0f0f0" stroke-width=".8" fill="none"/><circle cx="4.500" cy="6.100" r=".7" fill="#f0f0f0"/></svg>
<svg style="left:940px;top:559.5px" width="9" height="8" viewBox="0 0 9 8"><path d="M.4 2.800 H2 L4 1 V7 L2 5.200 H.4Z" stroke="#f0f0f0" stroke-width=".7" fill="none"/><path d="M5.400 2.600 C6 3.400 6 4.600 5.400 5.400 M6.800 1.600 C8 3 8 5 6.800 6.400" stroke="#f0f0f0" stroke-width=".7" fill="none"/></svg>
<svg style="left:953.5px;top:560px" width="10" height="7" viewBox="0 0 10 7"><path d="M.6 .8 H2.400" stroke="#f0f0f0" stroke-width=".8"/><path d="M1.400 1.600 H7.600 V2.700 H8.800 V4.700 H7.600 V5.800 H1.400Z" fill="#f0f0f0"/></svg>
<span class="t x" style="font-size:6.2px;color:#f4f4f4;transform:translate(975.00px,556px);">12:08 AM</span>
<span class="t x" style="font-size:6.2px;color:#f4f4f4;transform:translate(969.80px,565px) scaleX(1.0290);">11/30/2022</span>
<svg style="left:1005px;top:559px" width="8" height="9" viewBox="0 0 8 9"><path d="M4.600 .6 C7.600 2.400 6.800 7.600 3 7.800 C1.900 7.800 1 7.400 .5 6.600 C3.400 6.800 5.400 3.800 4.600 .6Z" stroke="#f0f0f0" stroke-width=".8" fill="none" stroke-linejoin="round"/></svg>
</div>
</body></html>
